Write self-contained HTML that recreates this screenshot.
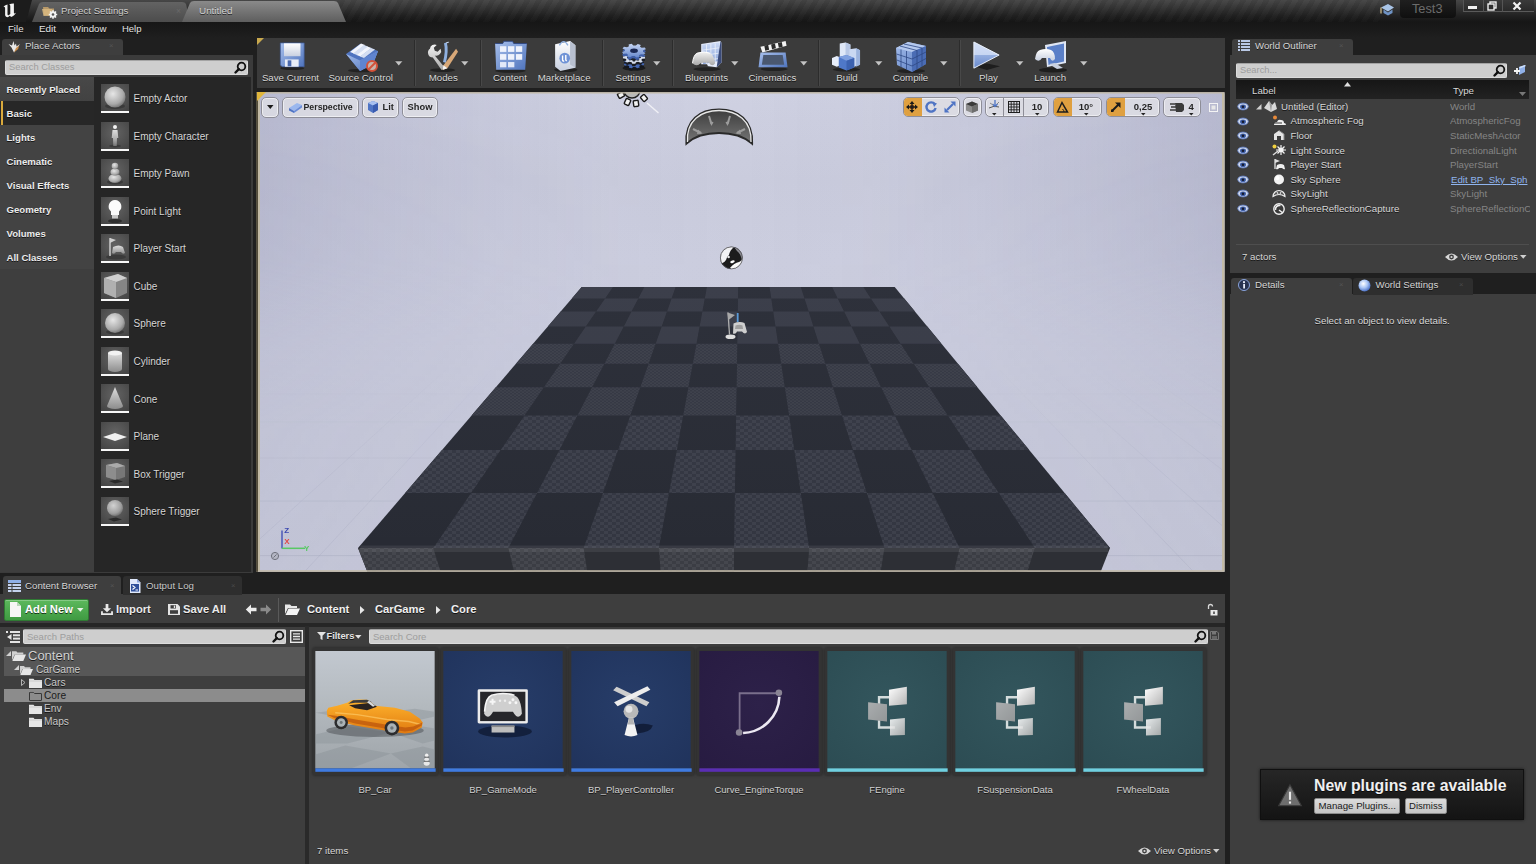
<!DOCTYPE html>
<html><head><meta charset="utf-8"><title>Unreal Editor</title>
<style>
*{box-sizing:border-box;margin:0;padding:0}
html,body{width:1536px;height:864px;overflow:hidden;background:#3e3e3e;font-family:"Liberation Sans",sans-serif;font-size:10px;color:#d8d8d8}
.a{position:absolute}
.t{position:absolute;white-space:nowrap;line-height:1}
svg{overflow:visible}
</style></head><body>
<div class="a" style="left:0px;top:0px;width:1536px;height:22px;background:linear-gradient(#474747 0,#353535 35%,#222 70%,#161616 100%);"></div>
<div class="a" style="left:340px;top:0px;width:1040px;height:22px;background:repeating-linear-gradient(120deg,rgba(0,0,0,.06) 0 5px,rgba(255,255,255,.012) 5px 10px);"></div>
<svg class="a" style="left:0px;top:0px;" width="32" height="22" viewBox="0 0 32 22"><path d="M0 0H32L26 22H0Z" fill="#1c1c1c"/>
<path d="M3.5 6.5c1.2-.9 2.6-1.7 4-2.1v9.800c0 .9.8 1.300 1.500.7l1.300-1V6.200c0-.9-.4-1.400-1.200-1.700 1.500-.7 3.200-1 4.800-.9v9.100c0 .7.500 1 1.100.6l.9-.6c-.6 1.900-2.600 3.500-4.800 4.300l-1.300-1.200-1.600 1.300c-1.700.2-3.100-.6-3.100-2.400V8.200c0-.9-.7-1.500-1.600-1.700z" fill="#f4f4f4"/></svg>
<svg class="a" style="left:30px;top:2px;" width="160" height="20" viewBox="0 0 160 20"><defs><linearGradient id="tg1" x1="0" y1="0" x2="0" y2="1"><stop offset="0" stop-color="#636363"/><stop offset="1" stop-color="#4c4c4c"/></linearGradient>
<linearGradient id="tg2" x1="0" y1="0" x2="0" y2="1"><stop offset="0" stop-color="#8a8a8a"/><stop offset="1" stop-color="#5e5e5e"/></linearGradient></defs>
<path d="M2 20 L9 2 Q10 0 13 0 H152 Q155 0 156 2 L160 20Z" fill="url(#tg1)"/></svg>
<svg class="a" style="left:182px;top:1px;" width="166" height="21" viewBox="0 0 166 21"><path d="M0 21 L8 2 Q9 0 12 0 H152 Q155 0 156 2 L164 21Z" fill="url(#tg2)"/></svg>
<svg class="a" style="left:42px;top:5px;" width="16" height="14" viewBox="0 0 16 14"><path d="M1 2h5l1.500 1.500H12V10H2Z" fill="#b89a6a"/><path d="M0 4h10l-1 7H1.500Z" fill="#d8b880" opacity=".85"/>
<circle cx="11" cy="9.500" r="3.200" fill="#f2f2f2"/><circle cx="11" cy="9.500" r="1.200" fill="#555"/>
<g stroke="#f2f2f2" stroke-width="1.600"><path d="M11 5.300v8.400M6.800 9.500h8.400M8 6.500l6 6M14 6.500l-6 6"/></g><circle cx="11" cy="9.500" r="1.300" fill="#555"/></svg>
<div class="t" style="left:61.0px;top:6.3px;font-size:9.64px;color:#cfcfcf;text-shadow:0 1px 0 rgba(0,0,0,.7);">Project Settings</div>
<div class="t" style="left:176.0px;top:7.3px;font-size:8.56px;color:#6a6a6a;">×</div>
<div class="t" style="left:199.0px;top:5.7px;font-size:9.88px;color:#d4d4d4;text-shadow:0 1px 0 rgba(0,0,0,.7);">Untitled</div>
<svg class="a" style="left:1380px;top:3px;" width="15" height="14" viewBox="0 0 15 14"><path d="M1 4.500 8 1l6 3.500-6 4Z" fill="#a9c4e6"/><path d="M3.500 6.500v3.500L8 12.500l4.500-2.500V6.500L8 9.500Z" fill="#6f93c4"/><path d="M1 4.500v6" stroke="#c9b98a" stroke-width="1.300"/></svg>
<div class="a" style="left:1400px;top:0px;width:56px;height:18px;background:linear-gradient(#1f1f1f,#0f0f0f);border-radius:0 0 4px 4px;"></div>
<div class="t" style="left:1412.0px;top:3.2px;font-size:12.76px;color:#6c6c6c;">Test3</div>
<div class="a" style="left:1463px;top:0px;width:71px;height:12px;background:linear-gradient(#3a3a3a,#2a2a2a);border-bottom:1px solid #5a5a5a;border-left:1px solid #555;"></div>
<div class="a" style="left:1483px;top:0px;width:1px;height:12px;background:#555;"></div>
<div class="a" style="left:1502px;top:0px;width:1px;height:12px;background:#555;"></div>
<div class="a" style="left:1468px;top:6px;width:9px;height:3px;background:#f0f0f0;"></div>
<svg class="a" style="left:1487px;top:1px;" width="11" height="10" viewBox="0 0 11 10"><rect x="3" y="1" width="6" height="6" fill="none" stroke="#eee" stroke-width="1.400"/><rect x="1" y="3" width="6" height="6" fill="#2e2e2e" stroke="#eee" stroke-width="1.400"/></svg>
<svg class="a" style="left:1512px;top:1px;" width="10" height="10" viewBox="0 0 10 10"><path d="M1.500 1.500l7 7M8.500 1.500l-7 7" stroke="#f2f2f2" stroke-width="2.200"/></svg>
<div class="a" style="left:0px;top:22px;width:1536px;height:16px;background:linear-gradient(#161616,#1f1f1f);"></div>
<div class="t" style="left:8.0px;top:24.0px;font-size:9.62px;color:#e4e4e4;text-shadow:0 1px 0 rgba(0,0,0,.7);">File</div>
<div class="t" style="left:39.0px;top:23.9px;font-size:9.87px;color:#e4e4e4;text-shadow:0 1px 0 rgba(0,0,0,.7);">Edit</div>
<div class="t" style="left:72.0px;top:23.9px;font-size:9.70px;color:#e4e4e4;text-shadow:0 1px 0 rgba(0,0,0,.7);">Window</div>
<div class="t" style="left:122.0px;top:24.1px;font-size:9.48px;color:#e4e4e4;text-shadow:0 1px 0 rgba(0,0,0,.7);">Help</div>
<div class="a" style="left:0px;top:38px;width:256px;height:539px;background:#1f1f1f;"></div>
<div class="a" style="left:0px;top:55px;width:253px;height:518px;background:#3b3b3b;"></div>
<div class="a" style="left:2px;top:38.6px;width:121px;height:16.4px;background:#3e3e3e;border-radius:3px 3px 0 0;"></div>
<svg class="a" style="left:7px;top:40px;" width="14" height="13" viewBox="0 0 14 13"><path d="M7 12.500 4.500 7.500 1.500 4l3.500 1.500L6.500 1l1 4.500 1.500-2 .5 3 3.500-2.500-3 4.500z" fill="#e8e8e8"/><path d="M7 12.500 9 8l3-2.500-.8 3.500z" fill="#c98c4a"/></svg>
<div class="t" style="left:25.0px;top:41.0px;font-size:9.90px;color:#d6d6d6;text-shadow:0 1px 0 rgba(0,0,0,.7);">Place Actors</div>
<div class="t" style="left:109.0px;top:42.2px;font-size:7.70px;color:#555;">×</div>
<div class="a" style="left:5px;top:60px;width:243px;height:15px;background:#cecece;border-radius:2px;border:1px solid #dcdcdc;border-top-color:#a4a4a4;"></div>
<div class="t" style="left:9.0px;top:62.9px;font-size:9.35px;color:#9d9d9d;">Search Classes</div>
<svg class="a" style="left:234px;top:61px;" width="13" height="13" viewBox="0 0 13 13"><circle cx="7.500" cy="5.500" r="3.800" fill="none" stroke="#111" stroke-width="1.800"/><path d="M4.800 8.200 1.500 11.500" stroke="#111" stroke-width="2.400" stroke-linecap="round"/></svg>
<div class="a" style="left:0px;top:77px;width:94px;height:495px;background:#3e3e3e;"></div>
<div class="a" style="left:0px;top:77px;width:94px;height:24px;background:linear-gradient(#484848,#424242);"></div>
<div class="t" style="left:6.5px;top:84.8px;font-size:9.60px;color:#ececec;font-weight:bold;text-shadow:0 1px 0 rgba(0,0,0,.7);">Recently Placed</div>
<div class="a" style="left:0px;top:101px;width:94px;height:24px;background:#272727;"></div>
<div class="a" style="left:1px;top:101px;width:2px;height:24px;background:#d9a93c;"></div>
<div class="t" style="left:6.5px;top:108.8px;font-size:9.60px;color:#ececec;font-weight:bold;text-shadow:0 1px 0 rgba(0,0,0,.7);">Basic</div>
<div class="a" style="left:0px;top:125px;width:94px;height:24px;background:#434343;"></div>
<div class="t" style="left:6.5px;top:132.8px;font-size:9.60px;color:#ececec;font-weight:bold;text-shadow:0 1px 0 rgba(0,0,0,.7);">Lights</div>
<div class="a" style="left:0px;top:149px;width:94px;height:24px;background:#434343;"></div>
<div class="t" style="left:6.5px;top:156.8px;font-size:9.60px;color:#ececec;font-weight:bold;text-shadow:0 1px 0 rgba(0,0,0,.7);">Cinematic</div>
<div class="a" style="left:0px;top:173px;width:94px;height:24px;background:#434343;"></div>
<div class="t" style="left:6.5px;top:180.8px;font-size:9.60px;color:#ececec;font-weight:bold;text-shadow:0 1px 0 rgba(0,0,0,.7);">Visual Effects</div>
<div class="a" style="left:0px;top:197px;width:94px;height:24px;background:#434343;"></div>
<div class="t" style="left:6.5px;top:204.8px;font-size:9.60px;color:#ececec;font-weight:bold;text-shadow:0 1px 0 rgba(0,0,0,.7);">Geometry</div>
<div class="a" style="left:0px;top:221px;width:94px;height:24px;background:#434343;"></div>
<div class="t" style="left:6.5px;top:228.8px;font-size:9.60px;color:#ececec;font-weight:bold;text-shadow:0 1px 0 rgba(0,0,0,.7);">Volumes</div>
<div class="a" style="left:0px;top:245px;width:94px;height:24px;background:#434343;"></div>
<div class="t" style="left:6.5px;top:252.8px;font-size:9.60px;color:#ececec;font-weight:bold;text-shadow:0 1px 0 rgba(0,0,0,.7);">All Classes</div>
<div class="a" style="left:94px;top:77px;width:156.6px;height:495px;background:#262626;"></div>
<svg width="0" height="0" class="a"><defs><linearGradient id="sh" x1="0" y1="0" x2="0" y2="1"><stop offset="0" stop-color="#dedede"/><stop offset="1" stop-color="#8c8c8c"/></linearGradient><radialGradient id="sp" cx=".4" cy=".35" r=".7"><stop offset="0" stop-color="#e6e6e6"/><stop offset=".7" stop-color="#a9a9a9"/><stop offset="1" stop-color="#6e6e6e"/></radialGradient></defs><defs><radialGradient id="tb" cx=".5" cy=".4" r=".7"><stop offset="0" stop-color="#777"/><stop offset="1" stop-color="#3c3c3c"/></radialGradient></defs></svg>
<svg class="a" style="left:101px;top:85px;" width="28" height="28" viewBox="0 1 28 28"><rect width="28" height="27" fill="#4f4f4f"/><rect width="28" height="27" fill="url(#tb)" opacity=".5"/><ellipse cx="14" cy="22" rx="10" ry="3" fill="#3a3a3a"/><circle cx="14" cy="13" r="10.500" fill="url(#sp)"/><rect y="27" width="28" height="2" fill="#f6f6f6"/></svg>
<div class="t" style="left:133.5px;top:94.1px;font-size:10.00px;color:#d6d6d6;text-shadow:0 1px 0 rgba(0,0,0,.7);">Empty Actor</div>
<svg class="a" style="left:101px;top:123px;" width="28" height="28" viewBox="0 1 28 28"><rect width="28" height="27" fill="#4f4f4f"/><rect width="28" height="27" fill="url(#tb)" opacity=".5"/><ellipse cx="14" cy="24" rx="6" ry="1.500" fill="#3a3a3a"/><circle cx="14" cy="5" r="2" fill="#f4f4f4"/><path d="M11.500 8h5l.8 8h-1.300l-.5 8h-1.200L14 17l-.3 7h-1.200l-.5-8h-1.300z" fill="url(#sh)"/><rect y="27" width="28" height="2" fill="#f6f6f6"/></svg>
<div class="t" style="left:133.5px;top:131.6px;font-size:10.00px;color:#d6d6d6;text-shadow:0 1px 0 rgba(0,0,0,.7);">Empty Character</div>
<svg class="a" style="left:101px;top:160px;" width="28" height="28" viewBox="0 1 28 28"><rect width="28" height="27" fill="#4f4f4f"/><rect width="28" height="27" fill="url(#tb)" opacity=".5"/><ellipse cx="14" cy="23" rx="8" ry="2.500" fill="#3a3a3a"/><ellipse cx="14" cy="19.500" rx="6.500" ry="4.500" fill="url(#sp)"/><ellipse cx="14" cy="13" rx="4.500" ry="3.500" fill="url(#sp)"/><circle cx="14" cy="7" r="3.300" fill="url(#sp)"/><rect y="27" width="28" height="2" fill="#f6f6f6"/></svg>
<div class="t" style="left:133.5px;top:169.2px;font-size:10.00px;color:#d6d6d6;text-shadow:0 1px 0 rgba(0,0,0,.7);">Empty Pawn</div>
<svg class="a" style="left:101px;top:198px;" width="28" height="28" viewBox="0 1 28 28"><rect width="28" height="27" fill="#4f4f4f"/><rect width="28" height="27" fill="url(#tb)" opacity=".5"/><ellipse cx="14" cy="24" rx="7" ry="2" fill="#2e2e2e"/><path d="M14 3a6.500 6.500 0 0 1 4 11.500V18h-8v-3.500A6.500 6.500 0 0 1 14 3z" fill="#fbfbfb"/><rect x="11" y="18" width="6" height="3.500" fill="#c9c9c9"/><rect y="27" width="28" height="2" fill="#f6f6f6"/></svg>
<div class="t" style="left:133.5px;top:206.8px;font-size:10.00px;color:#d6d6d6;text-shadow:0 1px 0 rgba(0,0,0,.7);">Point Light</div>
<svg class="a" style="left:101px;top:235px;" width="28" height="28" viewBox="0 1 28 28"><rect width="28" height="27" fill="#4f4f4f"/><rect width="28" height="27" fill="url(#tb)" opacity=".5"/><ellipse cx="15" cy="23" rx="10" ry="2.500" fill="#3a3a3a"/><path d="M9 4v18" stroke="#ddd" stroke-width="1.300"/><path d="M9 4l6 2-6 3z" fill="#cfcfcf"/><path d="M12 13q6-3 10 0l2 6q-2 2-4-1h-5q-2 3-4 1z" fill="url(#sh)"/><rect y="27" width="28" height="2" fill="#f6f6f6"/></svg>
<div class="t" style="left:133.5px;top:244.3px;font-size:10.00px;color:#d6d6d6;text-shadow:0 1px 0 rgba(0,0,0,.7);">Player Start</div>
<svg class="a" style="left:101px;top:273px;" width="28" height="28" viewBox="0 1 28 28"><rect width="28" height="27" fill="#4f4f4f"/><rect width="28" height="27" fill="url(#tb)" opacity=".5"/><path d="M3 6 17 2l9 4v15l-11 5-12-5z" fill="#858585"/><path d="M3 6 17 2l9 4-11 4z" fill="#cfcfcf"/><path d="M3 6l12 4v16L3 21z" fill="#b0b0b0"/><rect y="27" width="28" height="2" fill="#f6f6f6"/></svg>
<div class="t" style="left:133.5px;top:281.9px;font-size:10.00px;color:#d6d6d6;text-shadow:0 1px 0 rgba(0,0,0,.7);">Cube</div>
<svg class="a" style="left:101px;top:310px;" width="28" height="28" viewBox="0 1 28 28"><rect width="28" height="27" fill="#4f4f4f"/><rect width="28" height="27" fill="url(#tb)" opacity=".5"/><ellipse cx="14" cy="23" rx="9" ry="2.500" fill="#3a3a3a"/><circle cx="14" cy="14" r="10" fill="url(#sp)"/><rect y="27" width="28" height="2" fill="#f6f6f6"/></svg>
<div class="t" style="left:133.5px;top:319.4px;font-size:10.00px;color:#d6d6d6;text-shadow:0 1px 0 rgba(0,0,0,.7);">Sphere</div>
<svg class="a" style="left:101px;top:348px;" width="28" height="28" viewBox="0 1 28 28"><rect width="28" height="27" fill="#4f4f4f"/><rect width="28" height="27" fill="url(#tb)" opacity=".5"/><path d="M7 6v16a7 3 0 0 0 14 0V6z" fill="url(#sh)"/><ellipse cx="14" cy="6" rx="7" ry="2.500" fill="#f2f2f2"/><rect y="27" width="28" height="2" fill="#f6f6f6"/></svg>
<div class="t" style="left:133.5px;top:356.9px;font-size:10.00px;color:#d6d6d6;text-shadow:0 1px 0 rgba(0,0,0,.7);">Cylinder</div>
<svg class="a" style="left:101px;top:385px;" width="28" height="28" viewBox="0 1 28 28"><rect width="28" height="27" fill="#4f4f4f"/><rect width="28" height="27" fill="url(#tb)" opacity=".5"/><path d="M14 3 22 22a8 3 0 0 1-16 0z" fill="url(#sh)"/><rect y="27" width="28" height="2" fill="#f6f6f6"/></svg>
<div class="t" style="left:133.5px;top:394.5px;font-size:10.00px;color:#d6d6d6;text-shadow:0 1px 0 rgba(0,0,0,.7);">Cone</div>
<svg class="a" style="left:101px;top:423px;" width="28" height="28" viewBox="0 1 28 28"><rect width="28" height="27" fill="#4f4f4f"/><rect width="28" height="27" fill="url(#tb)" opacity=".5"/><path d="M2 15 14 11l12 4-12 4z" fill="#f0f0f0"/><rect y="27" width="28" height="2" fill="#f6f6f6"/></svg>
<div class="t" style="left:133.5px;top:432.0px;font-size:10.00px;color:#d6d6d6;text-shadow:0 1px 0 rgba(0,0,0,.7);">Plane</div>
<svg class="a" style="left:101px;top:460px;" width="28" height="28" viewBox="0 1 28 28"><rect width="28" height="27" fill="#4f4f4f"/><rect width="28" height="27" fill="url(#tb)" opacity=".5"/><path d="M5 6 16 4l8 3v11l-9 3-10-3z" fill="#777"/><path d="M5 6 16 4l8 3-9 2z" fill="#aaa"/><path d="M5 6l10 3v12L5 18z" fill="#8d8d8d"/><path d="M8 22l8-1.500 6 2-8 2z" fill="#2a2a2a"/><rect y="27" width="28" height="2" fill="#f6f6f6"/></svg>
<div class="t" style="left:133.5px;top:469.6px;font-size:10.00px;color:#d6d6d6;text-shadow:0 1px 0 rgba(0,0,0,.7);">Box Trigger</div>
<svg class="a" style="left:101px;top:498px;" width="28" height="28" viewBox="0 1 28 28"><rect width="28" height="27" fill="#4f4f4f"/><rect width="28" height="27" fill="url(#tb)" opacity=".5"/><circle cx="14" cy="11" r="8" fill="url(#sp)" opacity=".85"/><path d="M7 22l8-1.500 6 2-8 2z" fill="#2a2a2a"/><rect y="27" width="28" height="2" fill="#f6f6f6"/></svg>
<div class="t" style="left:133.5px;top:507.1px;font-size:10.00px;color:#d6d6d6;text-shadow:0 1px 0 rgba(0,0,0,.7);">Sphere Trigger</div>
<div class="a" style="left:253.5px;top:38px;width:978.5px;height:56px;background:#1f1f1f;"></div>
<div class="a" style="left:253px;top:55px;width:3.5px;height:518px;background:#202020;"></div>
<div class="a" style="left:256.5px;top:38px;width:969.5px;height:50px;background:#3b3b3b;"></div>
<svg class="a" style="left:257px;top:38px;" width="8" height="8" viewBox="0 0 8 8"><path d="M0 0h7L0 7z" fill="#c9a94e"/></svg>
<div class="a" style="left:414px;top:40px;width:1px;height:46px;background:#2c2c2c;"></div>
<div class="a" style="left:415px;top:40px;width:1px;height:46px;background:#484848;"></div>
<div class="a" style="left:479.5px;top:40px;width:1px;height:46px;background:#2c2c2c;"></div>
<div class="a" style="left:480.5px;top:40px;width:1px;height:46px;background:#484848;"></div>
<div class="a" style="left:602px;top:40px;width:1px;height:46px;background:#2c2c2c;"></div>
<div class="a" style="left:603px;top:40px;width:1px;height:46px;background:#484848;"></div>
<div class="a" style="left:672px;top:40px;width:1px;height:46px;background:#2c2c2c;"></div>
<div class="a" style="left:673px;top:40px;width:1px;height:46px;background:#484848;"></div>
<div class="a" style="left:817.5px;top:40px;width:1px;height:46px;background:#2c2c2c;"></div>
<div class="a" style="left:818.5px;top:40px;width:1px;height:46px;background:#484848;"></div>
<div class="a" style="left:959px;top:40px;width:1px;height:46px;background:#2c2c2c;"></div>
<div class="a" style="left:960px;top:40px;width:1px;height:46px;background:#484848;"></div>
<svg width="0" height="0" class="a"><defs>
<linearGradient id="bl" x1="0" y1="0" x2="1" y2="1"><stop offset="0" stop-color="#a8c0ec"/><stop offset="1" stop-color="#4f74bd"/></linearGradient>
<linearGradient id="bl2" x1="0" y1="0" x2="0" y2="1"><stop offset="0" stop-color="#c6d6f4"/><stop offset="1" stop-color="#6688cc"/></linearGradient>
<linearGradient id="wh" x1="0" y1="0" x2="0" y2="1"><stop offset="0" stop-color="#ffffff"/><stop offset="1" stop-color="#c8d0e0"/></linearGradient>
<linearGradient id="gy" x1="0" y1="0" x2="0" y2="1"><stop offset="0" stop-color="#f2f2f2"/><stop offset="1" stop-color="#a9a9a9"/></linearGradient>
</defs></svg>
<svg class="a" style="left:278.5px;top:42px;" width="26.5" height="27.5" viewBox="1 0 28 30"><ellipse cx="15" cy="28.500" rx="13" ry="2" fill="#222"/>
<path d="M2 1h26v26H4l-2-2z" fill="url(#bl)"/><path d="M2 1h26v26H4l-2-2z" fill="none" stroke="#3d5a9a" stroke-width=".8"/>
<rect x="6" y="1.500" width="18" height="14" fill="url(#wh)"/><rect x="7" y="19" width="15" height="8" fill="#e8ecf6"/><rect x="10" y="20" width="4" height="6.500" fill="#4a69ad"/></svg>
<div class="t" style="left:261.9px;top:72.7px;font-size:9.70px;color:#d8d8d8;text-shadow:0 1px 0 rgba(0,0,0,.7);">Save Current</div>
<svg class="a" style="left:345px;top:41px;" width="34" height="31" viewBox="0 0 34 31"><ellipse cx="17" cy="29.500" rx="14" ry="1.800" fill="#222"/>
<path d="M1 13 15 3l18 7-5 13-13 7z" fill="#4f74c0"/>
<path d="M5 11 16 2.500l4 1.500L9 12.500z" fill="#f2f5fc"/><path d="M8 12.500 19 4l4 1.500-11 8.500z" fill="#d4def2"/><path d="M11.500 14 22.500 5.500l4 1.500-11 8.500z" fill="#f2f5fc"/><path d="M15 15.500 26 7l4 1.500L19 17z" fill="#d4def2"/>
<path d="M1 13l14 6.500 18-9.500-5 13-13 7z" fill="url(#bl)"/><path d="M15 19.500l18-9.500-5 13-13 7z" fill="#5f84d0"/>
<circle cx="27" cy="25" r="5" fill="#c8b4ac" stroke="#d4523a" stroke-width="2"/><path d="M23.500 28.500l7-7" stroke="#d4523a" stroke-width="2"/></svg>
<div class="t" style="left:328.4px;top:72.7px;font-size:9.70px;color:#d8d8d8;text-shadow:0 1px 0 rgba(0,0,0,.7);">Source Control</div>
<svg class="a" style="left:395px;top:61px;" width="8" height="5" viewBox="0 0 8 5"><path d="M0 0h7.500L3.750 4.500z" fill="#c4c4c4"/><path d="M0 0h7.500" stroke="#222" stroke-width=".5"/></svg>
<svg class="a" style="left:427px;top:41px;" width="32" height="31" viewBox="0 0 33 32"><ellipse cx="16" cy="30" rx="13" ry="2" fill="#222"/>
<path d="M3 8a5 5 0 0 1 7-4l-3 3 1 3 3 1 3-3a5 5 0 0 1-6 7l10 12-3 3L6 17a5 5 0 0 1-3-9z" fill="url(#gy)"/>
<path d="M19 2q2 8-1 20" stroke="#8fb0e0" stroke-width="3" fill="none"/><path d="M19 2q3-2 4-1-2 2-4 1z" fill="#c8d8f0"/>
<path d="M30 8l2 3-11 17-5 2 1-5z" fill="#d8a878"/><path d="M16 30l1-5 4 3z" fill="#f4f4f4"/></svg>
<div class="t" style="left:428.7px;top:72.7px;font-size:9.70px;color:#d8d8d8;text-shadow:0 1px 0 rgba(0,0,0,.7);">Modes</div>
<svg class="a" style="left:461px;top:61px;" width="8" height="5" viewBox="0 0 8 5"><path d="M0 0h7.500L3.750 4.500z" fill="#c4c4c4"/><path d="M0 0h7.500" stroke="#222" stroke-width=".5"/></svg>
<svg class="a" style="left:494px;top:40px;" width="35" height="31" viewBox="1 1 32 28"><ellipse cx="16" cy="29" rx="14" ry="1.800" fill="#222"/>
<path d="M2 4h7l1-2h8l1 2h12l-1.500 24H3z" fill="url(#bl)"/><path d="M2 4h7l1-2h8l1 2h12" fill="none" stroke="#2c4380" stroke-width=".8"/>
<g fill="#eef2fc"><rect x="6.500" y="6.500" width="5.800" height="5.200"/><rect x="13.800" y="6.500" width="5.800" height="5.200"/><rect x="21" y="6.500" width="5.800" height="5.200"/><rect x="6.500" y="13.700" width="5.800" height="5.200"/><rect x="13.800" y="13.700" width="5.800" height="5.200"/><rect x="21" y="13.700" width="5.800" height="5.200"/><rect x="6.500" y="21" width="5.800" height="4.800" opacity=".9"/><rect x="13.800" y="21" width="5.800" height="4.800" opacity=".9"/></g></svg>
<div class="t" style="left:493.0px;top:72.7px;font-size:9.70px;color:#d8d8d8;text-shadow:0 1px 0 rgba(0,0,0,.7);">Content</div>
<svg class="a" style="left:551.5px;top:40px;" width="26.5" height="32" viewBox="1 1 23 30"><ellipse cx="13" cy="29" rx="11" ry="2" fill="#222"/>
<path d="M3 5 17 2l5 4v21L8 30 3 26z" fill="url(#wh)"/><path d="M17 2l5 4v21l-5-3z" fill="#b8c0d0"/>
<path d="M7 6q4-7 8 0" stroke="#8fb0e0" stroke-width="1.300" fill="none"/>
<circle cx="12" cy="18" r="5" fill="#6f93d6"/><path d="M10 15.500v4q0 1.500 1.500 1M13 15v4.500q0 1 1 .5" stroke="#fff" stroke-width="1.300" fill="none"/></svg>
<div class="t" style="left:537.8px;top:72.7px;font-size:9.70px;color:#d8d8d8;text-shadow:0 1px 0 rgba(0,0,0,.7);">Marketplace</div>
<svg class="a" style="left:620px;top:42px;" width="28" height="29" viewBox="0 0 28 30"><ellipse cx="14" cy="27" rx="12" ry="2.800" fill="#1c1c1c"/>
<path d="M22.5 21.5L24.7 22.4L23.7 24.0L21.0 23.8L19.4 24.8L19.9 26.4L17.2 27.1L15.5 25.9L13.2 25.9L11.6 27.2L8.8 26.6L9.1 25.0L7.4 24.1L4.7 24.4L3.5 22.8L5.6 21.9L5.5 20.5L3.3 19.6L4.3 18.0L7.0 18.2L8.6 17.2L8.1 15.6L10.8 14.9L12.5 16.1L14.8 16.1L16.4 14.8L19.2 15.4L18.9 17.0L20.6 17.9L23.3 17.6L24.5 19.2L22.4 20.1Z" fill="#3a5aa0"/><path d="M22.5 21.5L24.7 22.4L23.7 24.0L21.0 23.8L19.4 24.8L19.9 26.4L17.2 27.1L15.5 25.9L13.2 25.9L11.6 27.2L8.8 26.6L9.1 25.0L7.4 24.1L4.7 24.4L3.5 22.8L5.6 21.9L5.5 20.5L3.3 19.6L4.3 18.0L7.0 18.2L8.6 17.2L8.1 15.6L10.8 14.9L12.5 16.1L14.8 16.1L16.4 14.8L19.2 15.4L18.9 17.0L20.6 17.9L23.3 17.6L24.5 19.2L22.4 20.1Z" fill="#141820" transform="translate(0 2.500)"/><path d="M22.5 21.5L24.7 22.4L23.7 24.0L21.0 23.8L19.4 24.8L19.9 26.4L17.2 27.1L15.5 25.9L13.2 25.9L11.6 27.2L8.8 26.6L9.1 25.0L7.4 24.1L4.7 24.4L3.5 22.8L5.6 21.9L5.5 20.5L3.3 19.6L4.3 18.0L7.0 18.2L8.6 17.2L8.1 15.6L10.8 14.9L12.5 16.1L14.8 16.1L16.4 14.8L19.2 15.4L18.9 17.0L20.6 17.9L23.3 17.6L24.5 19.2L22.4 20.1Z" fill="#4668b4"/>
<path d="M21.5 18.7L23.0 20.1L20.8 21.4L18.3 20.5L16.1 21.0L15.3 22.6L12.2 22.6L11.6 20.9L9.4 20.4L6.9 21.2L4.7 19.9L6.3 18.5L5.4 17.2L2.6 16.8L2.6 15.0L5.5 14.6L6.5 13.3L5.0 11.9L7.2 10.6L9.7 11.5L11.9 11.0L12.7 9.4L15.8 9.4L16.4 11.1L18.6 11.6L21.1 10.8L23.3 12.1L21.7 13.5L22.6 14.8L25.4 15.2L25.4 17.0L22.5 17.4Z" fill="#1a1c22" transform="translate(0 2.500)"/><path d="M21.5 18.7L23.0 20.1L20.8 21.4L18.3 20.5L16.1 21.0L15.3 22.6L12.2 22.6L11.6 20.9L9.4 20.4L6.9 21.2L4.7 19.9L6.3 18.5L5.4 17.2L2.6 16.8L2.6 15.0L5.5 14.6L6.5 13.3L5.0 11.9L7.2 10.6L9.7 11.5L11.9 11.0L12.7 9.4L15.8 9.4L16.4 11.1L18.6 11.6L21.1 10.8L23.3 12.1L21.7 13.5L22.6 14.8L25.4 15.2L25.4 17.0L22.5 17.4Z" fill="#d4dcec"/><path d="M21.5 18.7L23.0 20.1L20.8 21.4L18.3 20.5L16.1 21.0L15.3 22.6L12.2 22.6L11.6 20.9L9.4 20.4L6.9 21.2L4.7 19.9L6.3 18.5L5.4 17.2L2.6 16.8L2.6 15.0L5.5 14.6L6.5 13.3L5.0 11.9L7.2 10.6L9.7 11.5L11.9 11.0L12.7 9.4L15.8 9.4L16.4 11.1L18.6 11.6L21.1 10.8L23.3 12.1L21.7 13.5L22.6 14.8L25.4 15.2L25.4 17.0L22.5 17.4Z" fill="#20242c" transform="translate(14 16) scale(.62) translate(-14 -16)"/>
<path d="M23.3 10.1L25.9 11.3L24.4 13.0L21.2 12.6L19.2 13.6L19.6 15.5L16.4 16.1L14.7 14.5L12.1 14.4L10.1 15.9L7.0 15.0L7.8 13.2L6.1 12.0L2.8 12.3L1.7 10.4L4.5 9.4L4.7 7.9L2.1 6.7L3.6 5.0L6.8 5.4L8.8 4.4L8.4 2.5L11.6 1.9L13.3 3.5L15.9 3.6L17.9 2.1L21.0 3.0L20.2 4.8L21.9 6.0L25.2 5.7L26.3 7.6L23.5 8.6Z" fill="#3f5fa8" transform="translate(0 2.500)"/><path d="M23.3 10.1L25.9 11.3L24.4 13.0L21.2 12.6L19.2 13.6L19.6 15.5L16.4 16.1L14.7 14.5L12.1 14.4L10.1 15.9L7.0 15.0L7.8 13.2L6.1 12.0L2.8 12.3L1.7 10.4L4.5 9.4L4.7 7.9L2.1 6.7L3.6 5.0L6.8 5.4L8.8 4.4L8.4 2.5L11.6 1.9L13.3 3.5L15.9 3.6L17.9 2.1L21.0 3.0L20.2 4.8L21.9 6.0L25.2 5.7L26.3 7.6L23.5 8.6Z" fill="url(#bl2)"/><ellipse cx="14" cy="9" rx="4" ry="2.300" fill="#1c2a55"/></svg>
<div class="t" style="left:615.5px;top:72.7px;font-size:9.70px;color:#d8d8d8;text-shadow:0 1px 0 rgba(0,0,0,.7);">Settings</div>
<svg class="a" style="left:653px;top:61px;" width="8" height="5" viewBox="0 0 8 5"><path d="M0 0h7.500L3.750 4.500z" fill="#c4c4c4"/><path d="M0 0h7.500" stroke="#222" stroke-width=".5"/></svg>
<svg class="a" style="left:691px;top:41px;" width="32" height="30" viewBox="0 0 32 31"><ellipse cx="16" cy="29" rx="14" ry="2" fill="#222"/>
<path d="M10 3 30 0l1 2v20l-5 5-16-2z" fill="#e6ecfa"/><path d="M11 4 29 1.500v19L12 24z" fill="url(#bl2)" opacity=".75"/><g stroke="#f4f7fd" stroke-width=".8" opacity=".9"><path d="M15.500 3.500v20M20 3v20M24.500 2.500v19M11 9.500l18-2.500M11 15l18-2.500M11.500 20.500l17.500-2.500"/></g>
<path d="M30 0l1 2v20l-5 5z" fill="#3a4a78"/>
<path d="M1 23q1-9 5-10.500 7-2.500 13 0 4 1.500 5.500 10.500-3 4.500-6.500-.5h-8q-4.500 5-9 .5z" fill="url(#gy)"/><path d="M1 23q1-9 5-10.500 7-2.500 13 0" fill="none" stroke="#fff" stroke-width="1"/><path d="M8 24h8l1 2H7z" fill="#333"/></svg>
<div class="t" style="left:684.9px;top:72.7px;font-size:9.70px;color:#d8d8d8;text-shadow:0 1px 0 rgba(0,0,0,.7);">Blueprints</div>
<svg class="a" style="left:731px;top:61px;" width="8" height="5" viewBox="0 0 8 5"><path d="M0 0h7.500L3.750 4.500z" fill="#c4c4c4"/><path d="M0 0h7.500" stroke="#222" stroke-width=".5"/></svg>
<svg class="a" style="left:758px;top:41px;" width="31" height="30" viewBox="0 0 31 31"><ellipse cx="16" cy="29" rx="14" ry="2" fill="#222"/>
<path d="M2 6 28 0l1 5L4 12z" fill="#f4f4f4"/><g fill="#2a2a2a"><path d="M6 5l4-1 1 5-4 1zM13 3.500l4-1 1 5-4 1zM20 2l4-1 1 5-4 1z"/></g>
<path d="M2 12h26l2 15H0z" fill="url(#bl)"/><path d="M5 14.500h20l1.500 10H3.500z" fill="#4a5870"/></svg>
<div class="t" style="left:748.5px;top:72.7px;font-size:9.70px;color:#d8d8d8;text-shadow:0 1px 0 rgba(0,0,0,.7);">Cinematics</div>
<svg class="a" style="left:800px;top:61px;" width="8" height="5" viewBox="0 0 8 5"><path d="M0 0h7.500L3.750 4.500z" fill="#c4c4c4"/><path d="M0 0h7.500" stroke="#222" stroke-width=".5"/></svg>
<svg class="a" style="left:832px;top:41px;" width="29" height="31" viewBox="0 0 30 31"><ellipse cx="15" cy="29" rx="14" ry="2" fill="#222"/>
<path d="M8 2l6-1 5 2v20l-6 2-5-2z" fill="#dfe8f8"/><path d="M14 1l5 2v20l-5 2z" fill="#b8c8e6"/>
<path d="M18 8l7-1 4 2v15l-6 2-5-2z" fill="#cad8f2"/><path d="M25 7l4 2v15l-4 2z" fill="#9db4de"/>
<path d="M0 17l5-2 5 2v7l-5 2-5-2z" fill="#e8eefa"/>
<path d="M7 16l8-2 8 3v10l-8 3-8-3z" fill="#4f78c8"/><path d="M7 16l8-2 8 3-8 3z" fill="#7fa0e0"/><path d="M15 20l8-3v10l-8 3z" fill="#3c62b0"/></svg>
<div class="t" style="left:836.2px;top:72.7px;font-size:9.70px;color:#d8d8d8;text-shadow:0 1px 0 rgba(0,0,0,.7);">Build</div>
<svg class="a" style="left:875px;top:61px;" width="8" height="5" viewBox="0 0 8 5"><path d="M0 0h7.500L3.750 4.500z" fill="#c4c4c4"/><path d="M0 0h7.500" stroke="#222" stroke-width=".5"/></svg>
<svg class="a" style="left:895px;top:41px;" width="32" height="32" viewBox="0 0 32 32"><ellipse cx="16" cy="30" rx="14" ry="2" fill="#222"/>
<path d="M1 7 13 1l18 4v18l-14 8L2 24z" fill="url(#bl)"/><path d="M1 7 13 1l18 4-14 6z" fill="#b4c8ee"/><path d="M17 11l14-6v18l-14 8z" fill="#4a6cb4"/>
<g stroke="#2e4884" stroke-width="1" opacity=".8" fill="none"><path d="M1.500 13l15.500 5 14-7M1.800 19l15.200 6 14-7.500M6 8.500v18M11.500 10v19M22 9v20M27 7v19M5 5l17 4.500M9 3l18 4"/></g></svg>
<div class="t" style="left:892.7px;top:72.7px;font-size:9.70px;color:#d8d8d8;text-shadow:0 1px 0 rgba(0,0,0,.7);">Compile</div>
<svg class="a" style="left:940px;top:61px;" width="8" height="5" viewBox="0 0 8 5"><path d="M0 0h7.500L3.750 4.500z" fill="#c4c4c4"/><path d="M0 0h7.500" stroke="#222" stroke-width=".5"/></svg>
<svg class="a" style="left:972px;top:40px;" width="29" height="32" viewBox="0 0 31 32"><path d="M2 27l14 4 14-4-14-3z" fill="#1e1e1e"/><path d="M2 1 29 15 2 29z" fill="url(#bl2)"/><path d="M2 1 29 15 2 15z" fill="#dbe6fa" opacity=".7"/><path d="M2 1 29 15 2 29z" fill="none" stroke="#eef3fc" stroke-width="1"/></svg>
<div class="t" style="left:979.1px;top:72.7px;font-size:9.70px;color:#d8d8d8;text-shadow:0 1px 0 rgba(0,0,0,.7);">Play</div>
<svg class="a" style="left:1016px;top:61px;" width="8" height="5" viewBox="0 0 8 5"><path d="M0 0h7.500L3.750 4.500z" fill="#c4c4c4"/><path d="M0 0h7.500" stroke="#222" stroke-width=".5"/></svg>
<svg class="a" style="left:1035px;top:41px;" width="32" height="31" viewBox="0 0 32 31"><ellipse cx="18" cy="29" rx="14" ry="2.500" fill="#1e1e1e"/>
<path d="M10 4 31 0v22l-19 4z" fill="#dfe6f4"/><path d="M12 6 29 2.500v18L13.500 24z" fill="#5b80c8"/>
<path d="M14 23l8 5 6-1-8-5z" fill="#c8d0e0"/>
<path d="M0 18q1-8 5-9 6-2 11 0 4 2 4 9-3 4-5-1H7q-3 5-7 1z" fill="url(#wh)"/></svg>
<div class="t" style="left:1034.3px;top:72.7px;font-size:9.70px;color:#d8d8d8;text-shadow:0 1px 0 rgba(0,0,0,.7);">Launch</div>
<svg class="a" style="left:1080px;top:61px;" width="8" height="5" viewBox="0 0 8 5"><path d="M0 0h7.500L3.750 4.500z" fill="#c4c4c4"/><path d="M0 0h7.500" stroke="#222" stroke-width=".5"/></svg>
<svg class="a" style="left:0;top:0" width="1536" height="580" viewBox="0 0 1536 580"><defs>
<linearGradient id="sky" x1="0" y1="0" x2="0" y2="1"><stop offset="0.001" stop-color="#cfd1e2"/><stop offset="0.058" stop-color="#cdcfe0"/><stop offset="0.183" stop-color="#caccdd"/><stop offset="0.350" stop-color="#cccedf"/><stop offset="0.517" stop-color="#cbcdde"/><stop offset="0.704" stop-color="#c8cadb"/><stop offset="1.000" stop-color="#c6c8d9"/></linearGradient>
<linearGradient id="skyc" x1="0" y1="0" x2="1" y2="0"><stop offset="0.000" stop-color="#75779d" stop-opacity="0.260"/><stop offset="0.125" stop-color="#75779d" stop-opacity="0.155"/><stop offset="0.250" stop-color="#75779d" stop-opacity="0.075"/><stop offset="0.375" stop-color="#75779d" stop-opacity="0.021"/><stop offset="0.500" stop-color="#75779d" stop-opacity="0.000"/><stop offset="0.625" stop-color="#75779d" stop-opacity="0.021"/><stop offset="0.750" stop-color="#75779d" stop-opacity="0.075"/><stop offset="0.875" stop-color="#75779d" stop-opacity="0.155"/><stop offset="1.000" stop-color="#75779d" stop-opacity="0.260"/></linearGradient>
<linearGradient id="vm" x1="0" y1="0" x2="0" y2="1"><stop offset="0.001" stop-color="#ffffff"/><stop offset="0.350" stop-color="#d9d9d9"/><stop offset="0.537" stop-color="#808080"/><stop offset="0.704" stop-color="#4c4c4c"/><stop offset="1.000" stop-color="#333333"/></linearGradient>
<mask id="vmask"><rect x="256.500" y="92.300" width="968" height="479.500" fill="url(#vm)"/></mask>
<linearGradient id="fog" x1="0" y1="0" x2="0" y2="1"><stop offset="0" stop-color="#8a8ea8" stop-opacity=".06"/><stop offset="1" stop-color="#8a8ea8" stop-opacity="0"/></linearGradient>
<pattern id="tex2" width="4" height="3" patternUnits="userSpaceOnUse"><rect width="2" height="1.500" fill="#fff" opacity=".045"/><rect x="2" y="1.500" width="2" height="1.500" fill="#fff" opacity=".045"/></pattern><pattern id="tex" width="8" height="6" patternUnits="userSpaceOnUse"><rect width="4" height="3" fill="#fff" opacity=".05"/><rect x="4" y="3" width="4" height="3" fill="#fff" opacity=".05"/></pattern>
<radialGradient id="chrome" cx=".55" cy=".6" r=".6"><stop offset="0" stop-color="#fff"/><stop offset=".18" stop-color="#222"/><stop offset=".45" stop-color="#0a0a0a"/><stop offset=".7" stop-color="#888"/><stop offset=".88" stop-color="#eee"/><stop offset="1" stop-color="#333"/></radialGradient>
<linearGradient id="dome" x1="0" y1="0" x2="0" y2="1"><stop offset="0" stop-color="#3c3c3c"/><stop offset="1" stop-color="#777"/></linearGradient>
<clipPath id="vpc"><rect x="257" y="92.500" width="967" height="479"/></clipPath>
</defs><rect x="256.500" y="92.300" width="968" height="479.500" fill="url(#sky)"/><rect x="256.500" y="92.300" width="968" height="479.500" fill="url(#skyc)" mask="url(#vmask)"/><clipPath id="gndc"><rect x="258" y="365" width="967" height="207"/></clipPath><linearGradient id="gfade" x1="0" y1="0" x2="0" y2="1"><stop offset="0" stop-color="#fff" stop-opacity="0"/><stop offset=".5" stop-color="#fff" stop-opacity=".6"/><stop offset="1" stop-color="#fff" stop-opacity="1"/></linearGradient><mask id="gmask"><rect x="258" y="365" width="967" height="207" fill="url(#gfade)"/></mask><g clip-path="url(#vpc)"><g clip-path="url(#gndc)" mask="url(#gmask)"><path d="M258 371H1223" stroke="#7e819e" stroke-width="1" opacity="0.05"/><path d="M258 394H1223" stroke="#7e819e" stroke-width="1" opacity="0.08"/><path d="M258 422H1223" stroke="#7e819e" stroke-width="1" opacity="0.12"/><path d="M258 458H1223" stroke="#7e819e" stroke-width="1" opacity="0.15"/><path d="M258 501H1223" stroke="#7e819e" stroke-width="1" opacity="0.17"/><path d="M258 555.6H1223" stroke="#7e819e" stroke-width="1" opacity="0.19"/><path d="M741 101L214.7 580" stroke="#7e819e" stroke-width="1" opacity=".13"/><path d="M741 101L296.9 580" stroke="#7e819e" stroke-width="1" opacity=".13"/><path d="M741 101L1201.5 580" stroke="#7e819e" stroke-width="1" opacity=".13"/><path d="M741 101L1283.7 580" stroke="#7e819e" stroke-width="1" opacity=".13"/><path d="M741 101L1366.0 580" stroke="#7e819e" stroke-width="1" opacity=".13"/><path d="M741 101L1448.2 580" stroke="#7e819e" stroke-width="1" opacity=".13"/><path d="M741 101L1530.4 580" stroke="#7e819e" stroke-width="1" opacity=".13"/><path d="M741 101L1612.7 580" stroke="#7e819e" stroke-width="1" opacity=".13"/><path d="M741 101L1694.9 580" stroke="#7e819e" stroke-width="1" opacity=".13"/><path d="M741 101L1777.1 580" stroke="#7e819e" stroke-width="1" opacity=".13"/><path d="M741 101L1859.4 580" stroke="#7e819e" stroke-width="1" opacity=".13"/><path d="M741 101L1941.6 580" stroke="#7e819e" stroke-width="1" opacity=".13"/><path d="M741 101L2023.8 580" stroke="#7e819e" stroke-width="1" opacity=".13"/><path d="M741 101L2106.0 580" stroke="#7e819e" stroke-width="1" opacity=".13"/><path d="M741 101L2188.3 580" stroke="#7e819e" stroke-width="1" opacity=".13"/></g><path d="M581.7 287.0L894.7 287.0L1110.0 548.0L358.0 548.0Z" fill="#282b34" /><path d="M471.1 493.0L537.1 493.0L508.4 548.0L433.2 548.0ZM603.0 493.0L669.0 493.0L658.8 548.0L583.6 548.0ZM734.9 493.0L800.8 493.0L809.2 548.0L734.0 548.0ZM866.8 493.0L932.7 493.0L959.6 548.0L884.4 548.0ZM998.7 493.0L1064.6 493.0L1110.0 548.0L1034.8 548.0ZM442.0 450.1L500.7 450.1L471.1 493.0L405.2 493.0ZM559.4 450.1L618.1 450.1L603.0 493.0L537.1 493.0ZM676.9 450.1L735.6 450.1L734.9 493.0L669.0 493.0ZM794.3 450.1L853.0 450.1L866.8 493.0L800.8 493.0ZM911.7 450.1L970.5 450.1L998.7 493.0L932.7 493.0ZM524.5 415.6L577.4 415.6L559.4 450.1L500.7 450.1ZM630.3 415.6L683.2 415.6L676.9 450.1L618.1 450.1ZM736.1 415.6L789.1 415.6L794.3 450.1L735.6 450.1ZM842.0 415.6L894.9 415.6L911.7 450.1L853.0 450.1ZM947.8 415.6L1000.7 415.6L1029.2 450.1L970.5 450.1ZM495.8 387.3L543.9 387.3L524.5 415.6L471.5 415.6ZM592.1 387.3L640.3 387.3L630.3 415.6L577.4 415.6ZM688.4 387.3L736.6 387.3L736.1 415.6L683.2 415.6ZM784.8 387.3L832.9 387.3L842.0 415.6L789.1 415.6ZM881.1 387.3L929.3 387.3L947.8 415.6L894.9 415.6ZM560.2 363.7L604.4 363.7L592.1 387.3L543.9 387.3ZM648.6 363.7L692.8 363.7L688.4 387.3L640.3 387.3ZM737.0 363.7L781.2 363.7L784.8 387.3L736.6 387.3ZM825.4 363.7L869.6 363.7L881.1 387.3L832.9 387.3ZM913.7 363.7L957.9 363.7L977.4 387.3L929.3 387.3ZM533.2 343.7L574.0 343.7L560.2 363.7L516.0 363.7ZM614.8 343.7L655.6 343.7L648.6 363.7L604.4 363.7ZM696.5 343.7L737.3 343.7L737.0 363.7L692.8 363.7ZM778.1 343.7L818.9 343.7L825.4 363.7L781.2 363.7ZM859.8 343.7L900.6 343.7L913.7 363.7L869.6 363.7ZM585.8 326.5L623.8 326.5L614.8 343.7L574.0 343.7ZM661.7 326.5L699.6 326.5L696.5 343.7L655.6 343.7ZM737.6 326.5L775.5 326.5L778.1 343.7L737.3 343.7ZM813.4 326.5L851.4 326.5L859.8 343.7L818.9 343.7ZM889.3 326.5L927.3 326.5L941.4 343.7L900.6 343.7ZM560.7 311.6L596.1 311.6L585.8 326.5L547.9 326.5ZM631.5 311.6L667.0 311.6L661.7 326.5L623.8 326.5ZM702.4 311.6L737.8 311.6L737.6 326.5L699.6 326.5ZM773.2 311.6L808.7 311.6L813.4 326.5L775.5 326.5ZM844.1 311.6L879.5 311.6L889.3 326.5L851.4 326.5ZM605.1 298.6L638.3 298.6L631.5 311.6L596.1 311.6ZM671.6 298.6L704.8 298.6L702.4 311.6L667.0 311.6ZM738.0 298.6L771.3 298.6L773.2 311.6L737.8 311.6ZM804.5 298.6L837.7 298.6L844.1 311.6L808.7 311.6ZM870.9 298.6L904.2 298.6L915.0 311.6L879.5 311.6ZM581.7 287.0L613.0 287.0L605.1 298.6L571.9 298.6ZM644.3 287.0L675.6 287.0L671.6 298.6L638.3 298.6ZM706.9 287.0L738.2 287.0L738.0 298.6L704.8 298.6ZM769.5 287.0L800.8 287.0L804.5 298.6L771.3 298.6ZM832.1 287.0L863.4 287.0L870.9 298.6L837.7 298.6Z" fill="#333641"/><path d="M471.1 493.0L537.1 493.0L508.4 548.0L433.2 548.0ZM603.0 493.0L669.0 493.0L658.8 548.0L583.6 548.0ZM734.9 493.0L800.8 493.0L809.2 548.0L734.0 548.0ZM866.8 493.0L932.7 493.0L959.6 548.0L884.4 548.0ZM998.7 493.0L1064.6 493.0L1110.0 548.0L1034.8 548.0ZM442.0 450.1L500.7 450.1L471.1 493.0L405.2 493.0ZM559.4 450.1L618.1 450.1L603.0 493.0L537.1 493.0ZM676.9 450.1L735.6 450.1L734.9 493.0L669.0 493.0ZM794.3 450.1L853.0 450.1L866.8 493.0L800.8 493.0ZM911.7 450.1L970.5 450.1L998.7 493.0L932.7 493.0ZM524.5 415.6L577.4 415.6L559.4 450.1L500.7 450.1ZM630.3 415.6L683.2 415.6L676.9 450.1L618.1 450.1ZM736.1 415.6L789.1 415.6L794.3 450.1L735.6 450.1ZM842.0 415.6L894.9 415.6L911.7 450.1L853.0 450.1ZM947.8 415.6L1000.7 415.6L1029.2 450.1L970.5 450.1Z" fill="url(#tex)"/><path d="M495.8 387.3L543.9 387.3L524.5 415.6L471.5 415.6ZM592.1 387.3L640.3 387.3L630.3 415.6L577.4 415.6ZM688.4 387.3L736.6 387.3L736.1 415.6L683.2 415.6ZM784.8 387.3L832.9 387.3L842.0 415.6L789.1 415.6ZM881.1 387.3L929.3 387.3L947.8 415.6L894.9 415.6ZM560.2 363.7L604.4 363.7L592.1 387.3L543.9 387.3ZM648.6 363.7L692.8 363.7L688.4 387.3L640.3 387.3ZM737.0 363.7L781.2 363.7L784.8 387.3L736.6 387.3ZM825.4 363.7L869.6 363.7L881.1 387.3L832.9 387.3ZM913.7 363.7L957.9 363.7L977.4 387.3L929.3 387.3ZM533.2 343.7L574.0 343.7L560.2 363.7L516.0 363.7ZM614.8 343.7L655.6 343.7L648.6 363.7L604.4 363.7ZM696.5 343.7L737.3 343.7L737.0 363.7L692.8 363.7ZM778.1 343.7L818.9 343.7L825.4 363.7L781.2 363.7ZM859.8 343.7L900.6 343.7L913.7 363.7L869.6 363.7Z" fill="url(#tex2)"/><path d="M585.8 326.5L623.8 326.5L614.8 343.7L574.0 343.7ZM661.7 326.5L699.6 326.5L696.5 343.7L655.6 343.7ZM737.6 326.5L775.5 326.5L778.1 343.7L737.3 343.7ZM813.4 326.5L851.4 326.5L859.8 343.7L818.9 343.7ZM889.3 326.5L927.3 326.5L941.4 343.7L900.6 343.7ZM560.7 311.6L596.1 311.6L585.8 326.5L547.9 326.5ZM631.5 311.6L667.0 311.6L661.7 326.5L623.8 326.5ZM702.4 311.6L737.8 311.6L737.6 326.5L699.6 326.5ZM773.2 311.6L808.7 311.6L813.4 326.5L775.5 326.5ZM844.1 311.6L879.5 311.6L889.3 326.5L851.4 326.5ZM605.1 298.6L638.3 298.6L631.5 311.6L596.1 311.6ZM671.6 298.6L704.8 298.6L702.4 311.6L667.0 311.6ZM738.0 298.6L771.3 298.6L773.2 311.6L737.8 311.6ZM804.5 298.6L837.7 298.6L844.1 311.6L808.7 311.6ZM870.9 298.6L904.2 298.6L915.0 311.6L879.5 311.6ZM581.7 287.0L613.0 287.0L605.1 298.6L571.9 298.6ZM644.3 287.0L675.6 287.0L671.6 298.6L638.3 298.6ZM706.9 287.0L738.2 287.0L738.0 298.6L704.8 298.6ZM769.5 287.0L800.8 287.0L804.5 298.6L771.3 298.6ZM832.1 287.0L863.4 287.0L870.9 298.6L837.7 298.6Z" fill="#fff" opacity=".022"/><path d="M581.7 287.0L894.7 287.0L1110.0 548.0L358.0 548.0Z" fill="url(#fog)" /><path d="M358.0 548.0L1110.0 548.0L1099.4 575.0L368.6 575.0Z" fill="#2d2f35" /><path d="M358.0 548.0L433.2 548.0L441.7 575.0L368.6 575.0ZM508.4 548.0L583.6 548.0L587.8 575.0L514.8 575.0ZM658.8 548.0L734.0 548.0L734.0 575.0L660.9 575.0ZM809.2 548.0L884.4 548.0L880.2 575.0L807.1 575.0ZM959.6 548.0L1034.8 548.0L1026.3 575.0L953.3 575.0Z" fill="#3b3d44"/><path d="M358.0 548.0L433.2 548.0L441.7 575.0L368.6 575.0ZM508.4 548.0L583.6 548.0L587.8 575.0L514.8 575.0ZM658.8 548.0L734.0 548.0L734.0 575.0L660.9 575.0ZM809.2 548.0L884.4 548.0L880.2 575.0L807.1 575.0ZM959.6 548.0L1034.8 548.0L1026.3 575.0L953.3 575.0Z" fill="url(#tex)"/><path d="M360.7 545.5L1107.4 545.5L1108.4 552.0L359.6 552.0Z" fill="#fff" opacity=".075"/></g><g clip-path="url(#vpc)"><circle cx="632" cy="90" r="8" fill="#b9b9b9" stroke="#222" stroke-width="1.500"/><rect x="618.5" y="92" width="5" height="6" rx="1" fill="#f2f2f2" stroke="#1a1a1a" stroke-width="1.400" transform="rotate(60 621 95)"/><rect x="625.0" y="99" width="5" height="6" rx="1" fill="#f2f2f2" stroke="#1a1a1a" stroke-width="1.400" transform="rotate(25 627.5 102)"/><rect x="633.5" y="100.5" width="5" height="6" rx="1" fill="#f2f2f2" stroke="#1a1a1a" stroke-width="1.400" transform="rotate(-8 636 103.5)"/><rect x="641.5" y="95" width="5" height="6" rx="1" fill="#f2f2f2" stroke="#1a1a1a" stroke-width="1.400" transform="rotate(-40 644 98)"/><path d="M647 103 658.500 113" stroke="#f4f4f8" stroke-width="1.400" opacity=".9"/></g><path d="M686.500 143.500C685 120 700 109.500 719 109.500S753 120 752 143.500C742 135 730 133 719 133S696 135 686.500 143.500Z" fill="url(#dome)" stroke="#2a2a2a" stroke-width="2.200"/>
<path d="M687.500 142C686 120.500 701 110.500 719 110.500S752 120.500 751 142" fill="none" stroke="#e8e8e8" stroke-width="1.300"/>
<g stroke="#9c9c9c" stroke-width="2" fill="#9c9c9c"><path d="M709 116l2.500 8M730 116l-2.500 8M693 129l8 4M745 129l-8 4"/><path d="M709.500 121.500l4 .5-2 4zM729.500 121.500l-4 .5 2 4zM698 129.500l4.500 4-5.500.5zM740 129.500l-4.500 4 5.500.5z" stroke="none"/></g><defs><clipPath id="ballc"><circle cx="731.400" cy="257.900" r="11.200"/></clipPath><filter id="bb" x="-20%" y="-20%" width="140%" height="140%"><feGaussianBlur stdDeviation=".7"/></filter></defs><g filter="url(#bb)"><circle cx="731.400" cy="257.900" r="11.200" fill="#1c1c1e"/><g clip-path="url(#ballc)"><path d="M719 262q-1-12 9-16 5-2 6 1-4 3-5 8-2 1-3 5-3 5-7 2z" fill="#f2f2f4"/><path d="M733 246q6 0 9 6 2 5 0 9-1-7-5-10-2-3-4-5z" fill="#8a8a90"/><path d="M730 268q4-5 9-6 3-1 4-5 1 8-4 11-5 3-9 0z" fill="#fafafa"/><ellipse cx="732.500" cy="261.700" rx="2.300" ry="1.300" fill="#fff" transform="rotate(-15 732.500 261.700)"/><circle cx="728.600" cy="257" r="1.300" fill="#e8e8e8"/></g><circle cx="731.400" cy="257.900" r="11" fill="none" stroke="#55555a" stroke-width=".8"/></g><g><path d="M728 312.500l1.500 22" stroke="#b0b0b0" stroke-width="1.300"/><path d="M727.500 312.500l7.500 2.500-6.500 5z" fill="#a8a8a8"/><path d="M737.700 313v9" stroke="#5a9ad8" stroke-width="1.800"/>
<path d="M733.500 323.500q6-2.500 11-.5l2.500 9q-2 3-5-.5h-5q-1 3-4 2z" fill="#cfcfcf"/><path d="M735.500 325.500q4-1.500 7 0l.5 3.500h-8z" fill="#9e9e9e"/><ellipse cx="730.500" cy="336.800" rx="5" ry="2.300" fill="#dedede"/></g><g stroke-width="1.500"><path d="M282 548.500v-18" stroke="#4a58b8"/><path d="M282 548.300h23" stroke="#58c864"/></g>
<text x="284.300" y="533" font-size="8" font-weight="bold" fill="#3a48b0" font-family="Liberation Sans,sans-serif">Z</text>
<text x="284.300" y="543.800" font-size="8" font-weight="bold" fill="#e04848" font-family="Liberation Sans,sans-serif">X</text>
<text x="304" y="551" font-size="8" font-weight="bold" fill="#58c864" font-family="Liberation Sans,sans-serif">Y</text>
<circle cx="275" cy="556" r="3.600" fill="#b4b6c4" stroke="#6e707c" stroke-width="1"/><path d="M273.500 557.500l3-3" stroke="#6e707c" stroke-width="1"/><path d="M256.500 92.300H1224.500V571.800H256.500Z M260 93.500V570.300H1222V93.500Z" fill="#c3bba6" fill-rule="evenodd"/><rect x="256.300" y="92.300" width="1.500" height="479.500" fill="#3a3220"/><path d="M257 92h9l-9 9z" fill="#e0b63c"/></svg>
<div class="a" style="left:253.5px;top:571.8px;width:976px;height:6px;background:#1f1f1f;"></div>
<div class="a" style="left:261px;top:97px;width:18px;height:21px;background:rgba(222,222,228,.82);border:1px solid #8e8e98;border-radius:5px;box-shadow:inset 0 0 0 1px rgba(255,255,255,.55)"></div><svg class="a" style="left:267px;top:105px;" width="7" height="5" viewBox="0 0 7 5"><path d="M0 0h6.500L3.250 4z" fill="#1a1a1a"/></svg>
<div class="a" style="left:282px;top:97px;width:77px;height:21px;background:rgba(222,222,228,.82);border:1px solid #8e8e98;border-radius:5px;box-shadow:inset 0 0 0 1px rgba(255,255,255,.55)"></div><svg class="a" style="left:287.5px;top:101.5px;" width="15" height="11" viewBox="0 0 15 11"><path d="M1 6 9 1l5 2-8 6z" fill="#9bb8ee"/><path d="M1 6l5 3v2L1 8.500z" fill="#4f74c4"/><path d="M6 9l8-6v2.500L6 11z" fill="#6a8cd8"/></svg><div class="t" style="left:303.5px;top:103.0px;font-size:8.78px;color:#262626;font-weight:bold;">Perspective</div>
<div class="a" style="left:362px;top:97px;width:37px;height:21px;background:rgba(222,222,228,.82);border:1px solid #8e8e98;border-radius:5px;box-shadow:inset 0 0 0 1px rgba(255,255,255,.55)"></div><svg class="a" style="left:367px;top:100px;" width="12" height="14" viewBox="0 0 12 14"><path d="M1 3 6 1l5 2v7l-5 3-5-3z" fill="#4f74c4"/><path d="M1 3 6 1l5 2-5 2.500z" fill="#a8c0f0"/><path d="M6 5.500l5-2.500v7l-5 3z" fill="#3a5cb0"/></svg><div class="t" style="left:382.6px;top:102.7px;font-size:9.30px;color:#262626;font-weight:bold;">Lit</div>
<div class="a" style="left:402px;top:97px;width:36px;height:21px;background:rgba(222,222,228,.82);border:1px solid #8e8e98;border-radius:5px;box-shadow:inset 0 0 0 1px rgba(255,255,255,.55)"></div><div class="t" style="left:407.6px;top:102.7px;font-size:9.30px;color:#262626;font-weight:bold;">Show</div>
<div class="a" style="left:902.5px;top:97px;width:57.0px;height:20px;background:rgba(222,222,228,.85);border:1px solid #8e8e98;border-radius:5px;overflow:hidden;box-shadow:inset 0 0 0 1px rgba(255,255,255,.5)"><div class="a" style="left:-1.0px;top:-1px;width:19.0px;height:20px;background:#dfa040"></div></div>
<svg class="a" style="left:906px;top:101px;" width="12" height="12" viewBox="0 0 12 12"><path d="M6 0 8.500 3h-5zM6 12 3.500 9h5zM0 6l3-2.500v5zM12 6 9 3.500v5z" fill="#1a1a1a"/><rect x="4.200" y="4.200" width="3.600" height="3.600" fill="#5a2a10"/><path d="M6 2v8M2 6h8" stroke="#1a1a1a" stroke-width="1.400"/></svg>
<svg class="a" style="left:925px;top:101px;" width="12" height="12" viewBox="0 0 12 12"><path d="M9.800 3.200A4.600 4.600 0 1 0 10.600 7" fill="none" stroke="#4f74c4" stroke-width="2.400"/><path d="M7.500 1 12 2.500 9 6z" fill="#4f74c4"/></svg>
<svg class="a" style="left:944px;top:101px;" width="12" height="12" viewBox="0 0 12 12"><path d="M3 9 9 3" stroke="#4f74c4" stroke-width="2.200"/><path d="M6.500 0.500h5v5zM.5 6.500v5h5z" fill="#4f74c4"/></svg>
<div class="a" style="left:962.5px;top:97px;width:19.0px;height:20px;background:rgba(222,222,228,.85);border:1px solid #8e8e98;border-radius:5px;overflow:hidden;box-shadow:inset 0 0 0 1px rgba(255,255,255,.5)"></div>
<svg class="a" style="left:966px;top:100px;" width="12" height="13" viewBox="0 0 12 13"><path d="M0 4 6 1.500 12 4v6.500L6 13 0 10.500z" fill="#8c8c8c"/><path d="M0 4 6 1.500 12 4 6 6.500z" fill="#3a3a3a"/><path d="M6 6.500 12 4v6.500L6 13z" fill="#6e6e6e"/></svg>
<div class="a" style="left:984.5px;top:97px;width:64.5px;height:20px;background:rgba(222,222,228,.85);border:1px solid #8e8e98;border-radius:5px;overflow:hidden;box-shadow:inset 0 0 0 1px rgba(255,255,255,.5)"><div class="a" style="left:17.5px;top:-1px;width:1px;height:20px;background:#8e8e98"></div><div class="a" style="left:37.5px;top:-1px;width:1px;height:20px;background:#8e8e98"></div></div>
<svg class="a" style="left:988px;top:100px;" width="12" height="11" viewBox="0 0 12 11"><path d="M1 8q5-3 10-1" stroke="#555" stroke-width="1" fill="none"/><path d="M7 0v6M4.500 4 7 6.500 9.500 4" stroke="#4f74c4" stroke-width="1.300" fill="none"/><path d="M2 3l3 2M11 2 9 4" stroke="#888" stroke-width="1"/></svg>
<svg class="a" style="left:992px;top:113px;" width="5" height="3" viewBox="0 0 5 3"><path d="M0 0h4.500L2.250 2.500z" fill="#222"/></svg>
<svg class="a" style="left:1008px;top:101px;" width="12" height="12" viewBox="0 0 12 12"><rect x=".5" y=".5" width="11" height="11" fill="none" stroke="#1e1e1e" stroke-width="1"/><path d="M3.200 0v12M6 0v12M8.800 0v12M0 3.200h12M0 6h12M0 8.800h12" stroke="#1e1e1e" stroke-width=".9"/></svg>
<div class="t" style="left:1031.7px;top:101.6px;font-size:9.50px;color:#262626;font-weight:bold;">10</div>
<svg class="a" style="left:1035px;top:113px;" width="5" height="3" viewBox="0 0 5 3"><path d="M0 0h4.500L2.250 2.500z" fill="#222"/></svg>
<div class="a" style="left:1052.5px;top:97px;width:49.0px;height:20px;background:rgba(222,222,228,.85);border:1px solid #8e8e98;border-radius:5px;overflow:hidden;box-shadow:inset 0 0 0 1px rgba(255,255,255,.5)"><div class="a" style="left:-1.0px;top:-1px;width:19.0px;height:20px;background:#dfa040"></div></div>
<svg class="a" style="left:1056px;top:101px;" width="13" height="12" viewBox="0 0 13 12"><path d="M1.500 11 6 1.500 11.500 11z" fill="none" stroke="#1e1e1e" stroke-width="1.500"/><path d="M8 11a4 4 0 0 0-1.500-3" fill="none" stroke="#1e1e1e" stroke-width="1"/></svg>
<div class="t" style="left:1078.8px;top:101.6px;font-size:9.50px;color:#262626;font-weight:bold;">10°</div>
<svg class="a" style="left:1084px;top:113px;" width="5" height="3" viewBox="0 0 5 3"><path d="M0 0h4.500L2.250 2.500z" fill="#222"/></svg>
<div class="a" style="left:1106px;top:97px;width:53.5px;height:20px;background:rgba(222,222,228,.85);border:1px solid #8e8e98;border-radius:5px;overflow:hidden;box-shadow:inset 0 0 0 1px rgba(255,255,255,.5)"><div class="a" style="left:-1px;top:-1px;width:19px;height:20px;background:#dfa040"></div></div>
<svg class="a" style="left:1110px;top:101px;" width="12" height="12" viewBox="0 0 12 12"><path d="M2 10 9 3" stroke="#1a1a1a" stroke-width="2"/><path d="M5 1.500h5.500V7z" fill="#1a1a1a"/><rect x="1" y="8.500" width="2.500" height="2.500" fill="#1a1a1a"/></svg>
<div class="t" style="left:1133.8px;top:101.6px;font-size:9.50px;color:#262626;font-weight:bold;">0,25</div>
<svg class="a" style="left:1141px;top:113px;" width="5" height="3" viewBox="0 0 5 3"><path d="M0 0h4.500L2.250 2.500z" fill="#222"/></svg>
<div class="a" style="left:1163px;top:97px;width:38px;height:20px;background:rgba(222,222,228,.85);border:1px solid #8e8e98;border-radius:5px;overflow:hidden;box-shadow:inset 0 0 0 1px rgba(255,255,255,.5)"></div>
<svg class="a" style="left:1170px;top:101px;" width="15" height="12" viewBox="0 0 15 12"><path d="M5 2h7l2 2v5l-2 2H6z" fill="#3a3a3a"/><path d="M0 3h5M1 6h5M0 9h6" stroke="#3a3a3a" stroke-width="1.300"/></svg>
<div class="t" style="left:1188.4px;top:101.6px;font-size:9.50px;color:#262626;font-weight:bold;">4</div>
<svg class="a" style="left:1189px;top:113px;" width="5" height="3" viewBox="0 0 5 3"><path d="M0 0h4.500L2.250 2.500z" fill="#222"/></svg>
<svg class="a" style="left:1209px;top:103px;" width="9" height="9" viewBox="0 0 9 9"><rect x=".5" y=".5" width="8" height="8" fill="none" stroke="#f4f4f4" stroke-width="1"/><rect x="2.500" y="2.500" width="4" height="4" fill="#e8e8e8"/></svg>
<div class="a" style="left:1224.5px;top:38px;width:312px;height:826px;background:#1f1f1f;"></div>
<div class="a" style="left:1230px;top:273px;width:306px;height:4.5px;background:#1f1f1f;"></div>
<div class="a" style="left:1229.5px;top:55px;width:307px;height:218px;background:#3e3e3e;"></div>
<div class="a" style="left:1232px;top:38.6px;width:121px;height:16.4px;background:#3e3e3e;border-radius:3px 3px 0 0;"></div>
<svg class="a" style="left:1238px;top:40px;" width="12" height="11" viewBox="0 0 12 11"><g fill="#b9c8e4"><rect x="0" y="0" width="2" height="2"/><rect x="0" y="3" width="2" height="2"/><rect x="0" y="6" width="2" height="2"/><rect x="0" y="9" width="2" height="2"/><rect x="3" y="0" width="9" height="2"/><rect x="3" y="3" width="9" height="2"/><rect x="3" y="6" width="9" height="2"/><rect x="3" y="9" width="9" height="2"/></g></svg>
<div class="t" style="left:1255.0px;top:41.4px;font-size:9.70px;color:#d6d6d6;text-shadow:0 1px 0 rgba(0,0,0,.7);">World Outliner</div>
<div class="t" style="left:1339.0px;top:42.2px;font-size:7.70px;color:#555;">×</div>
<div class="a" style="left:1236px;top:63px;width:271px;height:15px;background:#cecece;border-radius:2px;border:1px solid #dcdcdc;border-top-color:#a4a4a4;"></div>
<div class="t" style="left:1240.0px;top:65.9px;font-size:9.30px;color:#9d9d9d;">Search...</div>
<svg class="a" style="left:1493px;top:64px;" width="13" height="13" viewBox="0 0 13 13"><circle cx="7.500" cy="5.500" r="3.800" fill="none" stroke="#111" stroke-width="1.800"/><path d="M4.800 8.200 1.500 11.500" stroke="#111" stroke-width="2.400" stroke-linecap="round"/></svg>
<svg class="a" style="left:1513px;top:64px;" width="14" height="13" viewBox="0 0 14 13"><path d="M6 3l6-2v7l-6 3z" fill="#8fb0e8"/><path d="M6 3l6-2 1 1-6 2.500z" fill="#cfe0fa"/><path d="M1 7h6M4 4v6" stroke="#f4f4f4" stroke-width="1.800"/></svg>
<div class="a" style="left:1236px;top:80px;width:293px;height:19px;background:linear-gradient(#161616,#222);"></div>
<div class="t" style="left:1252.0px;top:85.7px;font-size:9.70px;color:#d8d8d8;text-shadow:0 1px 0 rgba(0,0,0,.7);">Label</div>
<div class="t" style="left:1453.0px;top:85.7px;font-size:9.70px;color:#d8d8d8;text-shadow:0 1px 0 rgba(0,0,0,.7);">Type</div>
<svg class="a" style="left:1344px;top:82px;" width="8" height="5" viewBox="0 0 8 5"><path d="M0 4.500h7L3.500 0z" fill="#e0e0e0"/></svg>
<svg class="a" style="left:1519px;top:92px;" width="8" height="5" viewBox="0 0 8 5"><path d="M0 0h7L3.500 4z" fill="#777"/></svg>
<svg class="a" style="left:1237px;top:102px;" width="12" height="9" viewBox="0 0 12 9"><ellipse cx="6" cy="4.500" rx="5.300" ry="3.400" fill="#cfd8ec"/><ellipse cx="6" cy="4.500" rx="5.300" ry="3.400" fill="none" stroke="#5f7cc0" stroke-width=".9"/><ellipse cx="6" cy="4.800" rx="3" ry="2.300" fill="#3f5fa8"/><circle cx="6" cy="4.800" r="1.300" fill="#14182a"/></svg>
<svg class="a" style="left:1256px;top:104px;" width="6" height="6" viewBox="0 0 6 6"><path d="M5.500 0v5.500H0z" fill="#d0d0d0"/></svg>
<svg class="a" style="left:1263px;top:100px;" width="14" height="13" viewBox="0 0 14 13"><path d="M1 8 6 1l3 4 3-3 2 7-6 3z" fill="#d8d8d8"/><path d="M6 1l3 4-1 7z" fill="#9a9a9a"/></svg>
<div class="t" style="left:1281.0px;top:101.7px;font-size:9.70px;color:#d8d8d8;text-shadow:0 1px 0 rgba(0,0,0,.7);">Untitled (Editor)</div>
<div class="t" style="left:1450.0px;top:101.7px;font-size:9.70px;color:#858585;width:80px;overflow:hidden;padding-bottom:3px;">World</div>
<svg class="a" style="left:1237px;top:117px;" width="12" height="9" viewBox="0 0 12 9"><ellipse cx="6" cy="4.500" rx="5.300" ry="3.400" fill="#cfd8ec"/><ellipse cx="6" cy="4.500" rx="5.300" ry="3.400" fill="none" stroke="#5f7cc0" stroke-width=".9"/><ellipse cx="6" cy="4.800" rx="3" ry="2.300" fill="#3f5fa8"/><circle cx="6" cy="4.800" r="1.300" fill="#14182a"/></svg>
<svg class="a" style="left:1272px;top:115px;" width="14" height="13" viewBox="0 0 14 13"><circle cx="3" cy="2.500" r="2" fill="#e88a3a"/><path d="M2 10q0-3 3-3 1-3 4-2 3 0 3 3 2 0 2 2z" fill="#f0f0f0"/><path d="M1 8h9" stroke="#333" stroke-width="1"/></svg>
<div class="t" style="left:1290.5px;top:116.3px;font-size:9.70px;color:#d8d8d8;text-shadow:0 1px 0 rgba(0,0,0,.7);">Atmospheric Fog</div>
<div class="t" style="left:1450.0px;top:116.3px;font-size:9.70px;color:#858585;width:80px;overflow:hidden;padding-bottom:3px;">AtmosphericFog</div>
<svg class="a" style="left:1237px;top:131px;" width="12" height="9" viewBox="0 0 12 9"><ellipse cx="6" cy="4.500" rx="5.300" ry="3.400" fill="#cfd8ec"/><ellipse cx="6" cy="4.500" rx="5.300" ry="3.400" fill="none" stroke="#5f7cc0" stroke-width=".9"/><ellipse cx="6" cy="4.800" rx="3" ry="2.300" fill="#3f5fa8"/><circle cx="6" cy="4.800" r="1.300" fill="#14182a"/></svg>
<svg class="a" style="left:1272px;top:129px;" width="14" height="13" viewBox="0 0 14 13"><path d="M2 11V5l5-3.500L12 5v6h-3V7H5v4z" fill="#e4e4e4"/><path d="M7 1.500 12 5v6" fill="none" stroke="#888" stroke-width="1"/></svg>
<div class="t" style="left:1290.5px;top:130.9px;font-size:9.70px;color:#d8d8d8;text-shadow:0 1px 0 rgba(0,0,0,.7);">Floor</div>
<div class="t" style="left:1450.0px;top:130.9px;font-size:9.70px;color:#858585;width:80px;overflow:hidden;padding-bottom:3px;">StaticMeshActor</div>
<svg class="a" style="left:1237px;top:146px;" width="12" height="9" viewBox="0 0 12 9"><ellipse cx="6" cy="4.500" rx="5.300" ry="3.400" fill="#cfd8ec"/><ellipse cx="6" cy="4.500" rx="5.300" ry="3.400" fill="none" stroke="#5f7cc0" stroke-width=".9"/><ellipse cx="6" cy="4.800" rx="3" ry="2.300" fill="#3f5fa8"/><circle cx="6" cy="4.800" r="1.300" fill="#14182a"/></svg>
<svg class="a" style="left:1272px;top:144px;" width="14" height="13" viewBox="0 0 14 13"><circle cx="2.500" cy="2.500" r="2" fill="#f0d040"/><circle cx="9" cy="6" r="2.800" fill="#f4f4f4"/><g stroke="#f4f4f4" stroke-width="1.200"><path d="M9 1v2M9 9v2M4 6h2M12 6h2M5.500 2.500l1.500 1.500M12.500 2.500 11 4M5.500 9.500 7 8M12.500 9.500 11 8"/></g><path d="M1 11l5-4" stroke="#ddd" stroke-width="1.500"/></svg>
<div class="t" style="left:1290.5px;top:145.5px;font-size:9.70px;color:#d8d8d8;text-shadow:0 1px 0 rgba(0,0,0,.7);">Light Source</div>
<div class="t" style="left:1450.0px;top:145.5px;font-size:9.70px;color:#858585;width:80px;overflow:hidden;padding-bottom:3px;">DirectionalLight</div>
<svg class="a" style="left:1237px;top:160px;" width="12" height="9" viewBox="0 0 12 9"><ellipse cx="6" cy="4.500" rx="5.300" ry="3.400" fill="#cfd8ec"/><ellipse cx="6" cy="4.500" rx="5.300" ry="3.400" fill="none" stroke="#5f7cc0" stroke-width=".9"/><ellipse cx="6" cy="4.800" rx="3" ry="2.300" fill="#3f5fa8"/><circle cx="6" cy="4.800" r="1.300" fill="#14182a"/></svg>
<svg class="a" style="left:1272px;top:158px;" width="14" height="13" viewBox="0 0 14 13"><path d="M3 1v10" stroke="#eee" stroke-width="1.200"/><path d="M3 1l5 2-5 2z" fill="#ddd"/><path d="M5 7q4-2 7 0l1 4q-1 1-3-1H7q-1 2-3 1z" fill="#f0f0f0"/></svg>
<div class="t" style="left:1290.5px;top:160.0px;font-size:9.70px;color:#d8d8d8;text-shadow:0 1px 0 rgba(0,0,0,.7);">Player Start</div>
<div class="t" style="left:1450.0px;top:160.0px;font-size:9.70px;color:#858585;width:80px;overflow:hidden;padding-bottom:3px;">PlayerStart</div>
<svg class="a" style="left:1237px;top:175px;" width="12" height="9" viewBox="0 0 12 9"><ellipse cx="6" cy="4.500" rx="5.300" ry="3.400" fill="#cfd8ec"/><ellipse cx="6" cy="4.500" rx="5.300" ry="3.400" fill="none" stroke="#5f7cc0" stroke-width=".9"/><ellipse cx="6" cy="4.800" rx="3" ry="2.300" fill="#3f5fa8"/><circle cx="6" cy="4.800" r="1.300" fill="#14182a"/></svg>
<svg class="a" style="left:1272px;top:173px;" width="14" height="13" viewBox="0 0 14 13"><circle cx="7" cy="6.500" r="5" fill="#f2f2f2"/><circle cx="5.500" cy="5" r="2" fill="#fff"/></svg>
<div class="t" style="left:1290.5px;top:174.6px;font-size:9.70px;color:#d8d8d8;text-shadow:0 1px 0 rgba(0,0,0,.7);">Sky Sphere</div>
<div class="t" style="left:1451.0px;top:174.6px;font-size:9.70px;color:#8fb4ee;text-decoration:underline;width:79px;overflow:hidden;padding-bottom:3px;">Edit BP_Sky_Sph</div>
<svg class="a" style="left:1237px;top:189px;" width="12" height="9" viewBox="0 0 12 9"><ellipse cx="6" cy="4.500" rx="5.300" ry="3.400" fill="#cfd8ec"/><ellipse cx="6" cy="4.500" rx="5.300" ry="3.400" fill="none" stroke="#5f7cc0" stroke-width=".9"/><ellipse cx="6" cy="4.800" rx="3" ry="2.300" fill="#3f5fa8"/><circle cx="6" cy="4.800" r="1.300" fill="#14182a"/></svg>
<svg class="a" style="left:1272px;top:187px;" width="14" height="13" viewBox="0 0 14 13"><path d="M1 9.500a6 6 0 0 1 12 0q-6-4-12 0z" fill="#555" stroke="#eee" stroke-width="1.200"/><path d="M5 5l1 2M9 5l-1 2" stroke="#eee" stroke-width="1"/></svg>
<div class="t" style="left:1290.5px;top:189.2px;font-size:9.70px;color:#d8d8d8;text-shadow:0 1px 0 rgba(0,0,0,.7);">SkyLight</div>
<div class="t" style="left:1450.0px;top:189.2px;font-size:9.70px;color:#858585;width:80px;overflow:hidden;padding-bottom:3px;">SkyLight</div>
<svg class="a" style="left:1237px;top:204px;" width="12" height="9" viewBox="0 0 12 9"><ellipse cx="6" cy="4.500" rx="5.300" ry="3.400" fill="#cfd8ec"/><ellipse cx="6" cy="4.500" rx="5.300" ry="3.400" fill="none" stroke="#5f7cc0" stroke-width=".9"/><ellipse cx="6" cy="4.800" rx="3" ry="2.300" fill="#3f5fa8"/><circle cx="6" cy="4.800" r="1.300" fill="#14182a"/></svg>
<svg class="a" style="left:1272px;top:202px;" width="14" height="13" viewBox="0 0 14 13"><circle cx="7" cy="7" r="5.200" fill="#3a3a3a" stroke="#f0f0f0" stroke-width="1.400"/><path d="M3.500 8a4 4 0 0 1 5-4.500" stroke="#f0f0f0" stroke-width="1.600" fill="none"/><path d="M7 8l4 3" stroke="#f0f0f0" stroke-width="1.500"/></svg>
<div class="t" style="left:1290.5px;top:203.7px;font-size:9.70px;color:#d8d8d8;text-shadow:0 1px 0 rgba(0,0,0,.7);">SphereReflectionCapture</div>
<div class="t" style="left:1450.0px;top:203.7px;font-size:9.70px;color:#858585;width:80px;overflow:hidden;padding-bottom:3px;">SphereReflectionC</div>
<div class="a" style="left:1236px;top:244px;width:293px;height:1px;background:#4e4e4e;"></div>
<div class="t" style="left:1242.0px;top:251.7px;font-size:9.70px;color:#d8d8d8;text-shadow:0 1px 0 rgba(0,0,0,.7);">7 actors</div>
<svg class="a" style="left:1445px;top:252.5px;" width="13" height="8" viewBox="0 0 13 8"><path d="M0 4q6.500-7 13 0-6.500 7-13 0z" fill="#d8d8d8"/><circle cx="6.500" cy="4" r="2.400" fill="#3e3e3e"/><circle cx="6.500" cy="4" r="1.100" fill="#d8d8d8"/></svg>
<div class="t" style="left:1461.0px;top:251.7px;font-size:9.70px;color:#d8d8d8;text-shadow:0 1px 0 rgba(0,0,0,.7);">View Options</div>
<svg class="a" style="left:1520px;top:255.0px;" width="7" height="4" viewBox="0 0 7 4"><path d="M0 0h6.500L3.250 3.800z" fill="#d0d0d0"/></svg>
<div class="a" style="left:1229.5px;top:294px;width:307px;height:570px;background:#3e3e3e;"></div>
<div class="a" style="left:1231px;top:277.5px;width:121px;height:17px;background:#3e3e3e;border-radius:3px 3px 0 0;"></div>
<div class="a" style="left:1352.5px;top:277.5px;width:120.5px;height:17px;background:#2e2e2e;border-radius:3px 3px 0 0;"></div>
<svg class="a" style="left:1238px;top:279px;" width="12" height="12" viewBox="0 0 12 12"><circle cx="6" cy="6" r="5.500" fill="#26324f" stroke="#8aa4dc" stroke-width="1"/><rect x="5.200" y="5" width="1.800" height="4.500" fill="#e8eefa"/><circle cx="6" cy="3.200" r="1.100" fill="#e8eefa"/></svg>
<div class="t" style="left:1255.0px;top:280.0px;font-size:9.70px;color:#d6d6d6;text-shadow:0 1px 0 rgba(0,0,0,.7);">Details</div>
<div class="t" style="left:1339.0px;top:281.2px;font-size:7.70px;color:#555;">×</div>
<svg class="a" style="left:1358px;top:279px;" width="13" height="13" viewBox="0 0 13 13"><defs><radialGradient id="glb" cx=".4" cy=".35" r=".7"><stop offset="0" stop-color="#fff"/><stop offset=".5" stop-color="#a8c4f4"/><stop offset="1" stop-color="#3f66c0"/></radialGradient></defs><circle cx="6.500" cy="6.500" r="6" fill="url(#glb)"/></svg>
<div class="t" style="left:1375.5px;top:280.0px;font-size:9.70px;color:#d6d6d6;text-shadow:0 1px 0 rgba(0,0,0,.7);">World Settings</div>
<div class="t" style="left:1459.0px;top:281.2px;font-size:7.70px;color:#4a4a4a;">×</div>
<div class="t" style="left:1314.6px;top:315.7px;font-size:9.70px;color:#d8d8d8;text-shadow:0 1px 0 rgba(0,0,0,.7);">Select an object to view details.</div>
<div class="a" style="left:1260px;top:769px;width:264px;height:51px;background:linear-gradient(#262626,#141414);border:1px solid #101010;box-shadow:0 0 3px rgba(0,0,0,.6);"></div>
<svg class="a" style="left:1277px;top:782.5px;" width="26" height="25" viewBox="0 0 24 23"><path d="M12 1.500 22.500 21h-21z" fill="#6e6e6e" stroke="#3a3a3a" stroke-width="1"/><rect x="11" y="8" width="2" height="7.500" fill="#e8e8e8"/><rect x="11" y="17" width="2" height="2" fill="#e8e8e8"/></svg>
<div class="t" style="left:1314.0px;top:777.7px;font-size:15.82px;color:#f0f0f0;font-weight:bold;text-shadow:0 1px 0 rgba(0,0,0,.7);">New plugins are available</div>
<div class="a" style="left:1314px;top:798px;width:86px;height:16px;background:linear-gradient(#dcdcdc,#c4c4c4);border:1px solid #8a8a8a;border-radius:2px;"></div>
<div class="t" style="left:1318.5px;top:801.3px;font-size:9.68px;color:#1a1a1a;">Manage Plugins...</div>
<div class="a" style="left:1405px;top:798px;width:42px;height:16px;background:linear-gradient(#dcdcdc,#c4c4c4);border:1px solid #8a8a8a;border-radius:2px;"></div>
<div class="t" style="left:1409.0px;top:801.3px;font-size:9.57px;color:#1a1a1a;">Dismiss</div>
<div class="a" style="left:0px;top:577px;width:1229.5px;height:18px;background:#1f1f1f;"></div>
<div class="a" style="left:0px;top:594px;width:1224.5px;height:270px;background:#3e3e3e;"></div>
<div class="a" style="left:1224.5px;top:577px;width:5px;height:287px;background:#1f1f1f;"></div>
<div class="a" style="left:3px;top:576px;width:118px;height:19px;background:#3e3e3e;border-radius:3px 3px 0 0;"></div>
<div class="a" style="left:123px;top:576px;width:119px;height:19px;background:#2e2e2e;border-radius:3px 3px 0 0;"></div>
<svg class="a" style="left:8px;top:580px;" width="13" height="12" viewBox="0 0 13 12"><rect width="13" height="3" fill="#8fb0e8"/><g fill="#c4d2ee"><rect y="4" width="3.500" height="2"/><rect x="4.500" y="4" width="8.500" height="2"/><rect y="7" width="3.500" height="2"/><rect x="4.500" y="7" width="8.500" height="2"/><rect y="10" width="3.500" height="2"/><rect x="4.500" y="10" width="8.500" height="2"/></g></svg>
<div class="t" style="left:25.0px;top:581.0px;font-size:9.70px;color:#d6d6d6;text-shadow:0 1px 0 rgba(0,0,0,.7);">Content Browser</div>
<div class="t" style="left:110.0px;top:581.7px;font-size:7.70px;color:#555;">×</div>
<svg class="a" style="left:129px;top:579px;" width="12" height="14" viewBox="0 0 12 14"><path d="M1 0h7l3.500 3.500V14H1z" fill="#dfe8fa"/><path d="M8 0l3.500 3.500H8z" fill="#8aa4dc"/><rect x="2" y="5" width="8" height="7.500" fill="#2e4f9a"/><path d="M3.500 6.500 6 8.500 3.500 10.500M6.500 11h2.500" stroke="#fff" stroke-width="1.100" fill="none"/></svg>
<div class="t" style="left:146.0px;top:581.0px;font-size:9.70px;color:#c8c8c8;text-shadow:0 1px 0 rgba(0,0,0,.7);">Output Log</div>
<div class="t" style="left:231.0px;top:581.7px;font-size:7.70px;color:#4a4a4a;">×</div>
<div class="a" style="left:0px;top:622.7px;width:1224.5px;height:4px;background:#262626;"></div>
<div class="a" style="left:4px;top:599px;width:85px;height:22px;background:linear-gradient(#5cb85c,#3f9a42);border:1px solid #2f7a33;border-radius:2px;box-shadow:inset 0 1px 0 rgba(255,255,255,.25);"></div>
<svg class="a" style="left:10px;top:602px;" width="11" height="15" viewBox="0 0 11 15"><path d="M0 0h7l4 4v11H0z" fill="#f6f6f6"/><path d="M7 0v4h4z" fill="#b9d8ba"/></svg>
<div class="t" style="left:25.0px;top:604.0px;font-size:11.20px;color:#fff;font-weight:bold;text-shadow:0 1px 0 rgba(0,0,0,.7);">Add New</div>
<svg class="a" style="left:77px;top:608px;" width="7" height="4" viewBox="0 0 7 4"><path d="M0 0h6.500L3.250 3.800z" fill="#e8f4e8"/></svg>
<svg class="a" style="left:100.5px;top:603.5px;" width="12" height="11" viewBox="0 0 13 12"><path d="M5 0h3v4.500h3L6.500 9 2 4.500h3z" fill="#e8e8e8"/><path d="M0 8v4h13V8h-2v2H2V8z" fill="#e8e8e8"/></svg>
<div class="t" style="left:116.0px;top:604.0px;font-size:11.20px;color:#eaeaea;font-weight:bold;text-shadow:0 1px 0 rgba(0,0,0,.7);">Import</div>
<svg class="a" style="left:168px;top:604px;" width="12" height="11" viewBox="0 0 12 11"><path d="M0 0h9.500L12 2.500V11H0z" fill="#e4e4e4"/><rect x="2.500" y="1.200" width="5.500" height="3.300" fill="#3e3e3e"/><rect x="2" y="6.200" width="8" height="3.600" fill="#3e3e3e"/><rect x="5.800" y="1.600" width="1.400" height="2.400" fill="#e4e4e4"/></svg>
<div class="t" style="left:183.0px;top:604.0px;font-size:11.20px;color:#eaeaea;font-weight:bold;text-shadow:0 1px 0 rgba(0,0,0,.7);">Save All</div>
<svg class="a" style="left:245px;top:604px;" width="12" height="11" viewBox="0 0 12 11"><path d="M6 .5.800 5.500 6 10.500V7.300h5.500V3.700H6z" fill="#ececec"/></svg>
<svg class="a" style="left:260px;top:604px;" width="12" height="11" viewBox="0 0 12 11"><path d="M6 .5l5.200 5L6 10.500V7.300H.5V3.700H6z" fill="#8a8a8a"/></svg>
<div class="a" style="left:278px;top:598px;width:1px;height:24px;background:#5a5a5a;"></div>
<svg class="a" style="left:285px;top:603px;" width="15" height="12" viewBox="0 0 15 12"><path d="M0 1.500h5l1.500 1.500H12v2H3L0 11z" fill="#e8e8e8"/><path d="M3.500 5.500H15L12 12H.5z" fill="#f4f4f4"/></svg>
<div class="t" style="left:307.0px;top:604.0px;font-size:11.20px;color:#f0f0f0;font-weight:bold;text-shadow:0 1px 0 rgba(0,0,0,.7);">Content</div>
<svg class="a" style="left:360px;top:606px;" width="5" height="8" viewBox="0 0 5 8"><path d="M0 0l4.500 4L0 8z" fill="#e8e8e8"/></svg>
<div class="t" style="left:375.0px;top:604.0px;font-size:11.20px;color:#f0f0f0;font-weight:bold;text-shadow:0 1px 0 rgba(0,0,0,.7);">CarGame</div>
<svg class="a" style="left:436px;top:606px;" width="5" height="8" viewBox="0 0 5 8"><path d="M0 0l4.500 4L0 8z" fill="#e8e8e8"/></svg>
<div class="t" style="left:451.0px;top:604.0px;font-size:11.20px;color:#f0f0f0;font-weight:bold;text-shadow:0 1px 0 rgba(0,0,0,.7);">Core</div>
<svg class="a" style="left:1207px;top:604px;" width="11" height="12" viewBox="0 0 11 12"><path d="M1.500 5V2.500a2 2 0 0 1 4 0" fill="none" stroke="#d8d8d8" stroke-width="1.300"/><rect x="3.500" y="6" width="7" height="5.500" fill="#e8e8e8"/><rect x="6.300" y="7.500" width="1.400" height="2.500" fill="#333"/></svg>
<div class="a" style="left:305px;top:626px;width:4px;height:238px;background:#2a2a2a;"></div>
<svg class="a" style="left:6px;top:631px;" width="14" height="12" viewBox="0 0 14 12"><g fill="#e4e4e4"><rect x="0" y="0" width="2" height="2"/><rect x="4" y="0" width="10" height="2"/><rect x="7" y="3.300" width="7" height="2"/><rect x="7" y="6.600" width="7" height="2"/><rect x="4" y="10" width="10" height="2"/><path d="M5.500 3 1 6l4.500 3z"/></g></svg>
<div class="a" style="left:23px;top:629px;width:263px;height:15px;background:#cecece;border-radius:2px;border:1px solid #dcdcdc;border-top-color:#a4a4a4;"></div>
<div class="t" style="left:27.0px;top:631.8px;font-size:9.50px;color:#9d9d9d;">Search Paths</div>
<svg class="a" style="left:272px;top:630px;" width="13" height="13" viewBox="0 0 13 13"><circle cx="7.500" cy="5.500" r="3.800" fill="none" stroke="#111" stroke-width="1.800"/><path d="M4.800 8.200 1.500 11.500" stroke="#111" stroke-width="2.400" stroke-linecap="round"/></svg>
<svg class="a" style="left:290px;top:630px;" width="13" height="13" viewBox="0 0 13 13"><rect x=".7" y=".7" width="11.600" height="11.600" fill="#3a3a3a" stroke="#e8e8e8" stroke-width="1.400"/><path d="M3 3.800h7M3 6.500h7M3 9.200h7" stroke="#e8e8e8" stroke-width="1.300"/></svg>
<div class="a" style="left:4px;top:647px;width:301px;height:16px;background:#575757;"></div>
<div class="a" style="left:4px;top:663px;width:301px;height:13px;background:#575757;"></div>
<div class="a" style="left:4px;top:689px;width:301px;height:13px;background:#8c8c8c;"></div>
<svg class="a" style="left:6px;top:651px;" width="5" height="5" viewBox="0 0 5 5"><path d="M5 0v5H0z" fill="#d0d0d0"/></svg>
<svg class="a" style="left:12px;top:650px;" width="14" height="11" viewBox="0 0 13 10"><path d="M0 1h4l1 1.200h5.500V4H2.500L0 9.500z" fill="#d0d0d0"/><path d="M2.800 4H13L10.500 10H.3z" fill="#e6e6e6"/></svg>
<div class="t" style="left:28.0px;top:649.1px;font-size:13.00px;color:#d2d2d2;text-shadow:0 1px 0 rgba(0,0,0,.7);">Content</div>
<svg class="a" style="left:14px;top:665px;" width="5" height="5" viewBox="0 0 5 5"><path d="M5 0v5H0z" fill="#d0d0d0"/></svg>
<svg class="a" style="left:20px;top:665px;" width="13" height="10" viewBox="0 0 13 10"><path d="M0 1h4l1 1.200h5.500V4H2.500L0 9.500z" fill="#d0d0d0"/><path d="M2.800 4H13L10.500 10H.3z" fill="#e6e6e6"/></svg>
<div class="t" style="left:36.0px;top:664.8px;font-size:10.20px;color:#cccccc;text-shadow:0 1px 0 rgba(0,0,0,.7);">CarGame</div>
<svg class="a" style="left:21px;top:679px;" width="5" height="7" viewBox="0 0 5 7"><path d="M.5.500 4 3.500.5 6.500z" fill="none" stroke="#c0c0c0" stroke-width=".9"/></svg>
<svg class="a" style="left:29px;top:678px;" width="13" height="10" viewBox="0 0 13 10"><path d="M0 .8h4.500l1 1.200H13V10H0z" fill="#e6e6e6"/><path d="M0 3h13" stroke="#bdbdbd" stroke-width=".6"/></svg>
<div class="t" style="left:44.0px;top:677.8px;font-size:10.20px;color:#c8c8c8;text-shadow:0 1px 0 rgba(0,0,0,.7);">Cars</div>
<svg class="a" style="left:29px;top:691px;" width="13" height="10" viewBox="0 0 13 10"><path d="M0 .8h4.500l1 1.200H13V10H0z" fill="#d0d0d0"/><path d="M0 3h13" stroke="#bdbdbd" stroke-width=".6"/></svg>
<svg class="a" style="left:29px;top:691px;" width="13" height="10" viewBox="0 0 13 10"><path d="M.5 1.300h4l1 1.200h7v7H.5z" fill="#8c8c8c" stroke="#2a2a2a" stroke-width=".9"/></svg>
<div class="t" style="left:44.0px;top:690.8px;font-size:10.20px;color:#1c1c1c;">Core</div>
<svg class="a" style="left:29px;top:704px;" width="13" height="10" viewBox="0 0 13 10"><path d="M0 .8h4.500l1 1.200H13V10H0z" fill="#e6e6e6"/><path d="M0 3h13" stroke="#bdbdbd" stroke-width=".6"/></svg>
<div class="t" style="left:44.0px;top:703.7px;font-size:10.20px;color:#c8c8c8;text-shadow:0 1px 0 rgba(0,0,0,.7);">Env</div>
<svg class="a" style="left:29px;top:717px;" width="13" height="10" viewBox="0 0 13 10"><path d="M0 .8h4.500l1 1.200H13V10H0z" fill="#e6e6e6"/><path d="M0 3h13" stroke="#bdbdbd" stroke-width=".6"/></svg>
<div class="t" style="left:44.0px;top:716.7px;font-size:10.20px;color:#c8c8c8;text-shadow:0 1px 0 rgba(0,0,0,.7);">Maps</div>
<svg class="a" style="left:317px;top:632px;" width="9" height="8" viewBox="0 0 9 8"><path d="M0 0h9L5.500 3.800V8L3.500 7V3.800z" fill="#e4e4e4"/></svg>
<div class="t" style="left:326.5px;top:631.7px;font-size:9.30px;color:#e4e4e4;font-weight:bold;text-shadow:0 1px 0 rgba(0,0,0,.7);">Filters</div>
<svg class="a" style="left:355px;top:635px;" width="7" height="4" viewBox="0 0 7 4"><path d="M0 0h6.500L3.250 3.800z" fill="#e0e0e0"/></svg>
<div class="a" style="left:369px;top:629px;width:838.5px;height:15px;background:#cecece;border-radius:2px;border:1px solid #dcdcdc;border-top-color:#a4a4a4;"></div>
<div class="t" style="left:373.0px;top:632.3px;font-size:9.50px;color:#9d9d9d;">Search Core</div>
<svg class="a" style="left:1194px;top:630px;" width="13" height="13" viewBox="0 0 13 13"><circle cx="7.500" cy="5.500" r="3.800" fill="none" stroke="#111" stroke-width="1.800"/><path d="M4.800 8.200 1.500 11.500" stroke="#111" stroke-width="2.400" stroke-linecap="round"/></svg>
<svg class="a" style="left:1210px;top:631px;" width="9" height="9" viewBox="0 0 9 9"><path d="M.5.500h6.500L8.500 2v6.500h-8z" fill="none" stroke="#777" stroke-width="1"/><rect x="2" y="1" width="4" height="2.500" fill="#777"/><rect x="2" y="5" width="5" height="3" fill="#666"/></svg>
<svg width="0" height="0" class="a"><defs>
<radialGradient id="bpbg" cx=".5" cy=".45" r=".75"><stop offset="0" stop-color="#273d69"/><stop offset="1" stop-color="#20335c"/></radialGradient>
<radialGradient id="cvbg" cx=".5" cy=".45" r=".75"><stop offset="0" stop-color="#2d2149"/><stop offset="1" stop-color="#271b41"/></radialGradient>
<radialGradient id="stbg" cx=".5" cy=".45" r=".75"><stop offset="0" stop-color="#33565d"/><stop offset="1" stop-color="#2c4c53"/></radialGradient>
<linearGradient id="carbg" x1="0" y1="0" x2="0" y2="1"><stop offset="0" stop-color="#c2c8d0"/><stop offset=".45" stop-color="#b4babf"/><stop offset="1" stop-color="#9fa5aa"/></linearGradient>
<linearGradient id="carb" x1="0" y1="0" x2="0" y2="1"><stop offset="0" stop-color="#ffb52e"/><stop offset="1" stop-color="#e07a10"/></linearGradient>
<linearGradient id="plate" x1="0" y1="0" x2="1" y2="1"><stop offset="0" stop-color="#ffffff"/><stop offset="1" stop-color="#b4b4b4"/></linearGradient>
</defs></svg>
<div class="a" style="left:313px;top:648px;width:125px;height:127px;background:#333;box-shadow:0 0 3px rgba(0,0,0,.5)"></div>
<svg class="a" style="left:315px;top:650.7px;" width="121" height="121.3" viewBox="0 0 121 122"><rect width="120" height="118" fill="url(#carbg)"/>
<g opacity=".38" fill="#878e94"><path d="M0 62l40-5 30 5-38 6zM70 62l30-4 20 3v5l-18 4zM0 84l34-8 42 6-44 11H0zM76 82l32-6 12 2v12l-12 3zM0 104l30-9 46 8-40 15H0zM76 103l32-7 12 3v19H96z"/></g>
<ellipse cx="60" cy="80" rx="49" ry="6.500" fill="#4a4e52" opacity=".5"/>
<path d="M11.500 60l1.500-3 9-2 10-3 4-2.500 8-.8 8 .3 4 2.500 4 3.500 20 2 15 4 10 7 3 4-1 5-9 5-8 1-20-3-30-5-20-5-8-4z" fill="url(#carb)"/>
<path d="M20 62l22 2 30 5 22 2 12 3" stroke="#ffd070" stroke-width="1.500" fill="none" opacity=".6"/>
<path d="M12 64l8 4 20 5 30 5 20 3 8-1 9-5 .5-3-9 4-8 1-20-3-30-5-20-4z" fill="#b9520c" opacity=".7"/>
<path d="M33 53l5-3.500 14-.5 5 2.500-7 .5-10 0z" fill="#3c3c3e"/>
<path d="M34 54.500l22-2.500 6 4-10 3.500-12-2z" fill="#2a2320"/>
<path d="M52 51.500l2-1.500 6 5-2 1z" fill="#d8dce0"/>
<circle cx="26" cy="72" r="6.800" fill="#2c2c2e"/><circle cx="26" cy="72" r="4.300" fill="#aab2b6"/><circle cx="26" cy="72" r="1.500" fill="#6e767a"/>
<circle cx="77" cy="77.500" r="7.400" fill="#2c2c2e"/><circle cx="77" cy="77.500" r="4.800" fill="#aab2b6"/><circle cx="77" cy="77.500" r="1.700" fill="#6e767a"/>
<g transform="translate(109,103)"><circle cx="3" cy="2" r="1.800" fill="#f0f0f0"/><ellipse cx="3" cy="6" rx="2.300" ry="2" fill="#e8e8e8"/><ellipse cx="3" cy="10" rx="3" ry="2.300" fill="#e8e8e8"/><path d="M.5 3.800h5M0 8h6" stroke="#555" stroke-width=".8"/></g><rect y="118" width="121" height="3.500" fill="#3f7be0"/></svg>
<div class="t" style="left:358.4px;top:784.6px;font-size:9.50px;color:#d0d0d0;text-shadow:0 1px 0 rgba(0,0,0,.7);">BP_Car</div>
<div class="a" style="left:441px;top:648px;width:125px;height:127px;background:#333;box-shadow:0 0 3px rgba(0,0,0,.5)"></div>
<svg class="a" style="left:443px;top:650.7px;" width="121" height="121.3" viewBox="0 0 121 122"><rect width="120" height="118" fill="url(#bpbg)"/><ellipse cx="62" cy="81" rx="27" ry="6" fill="#0e1830" opacity=".75"/>
<rect x="34.500" y="38.500" width="50.500" height="34.500" rx="1.500" fill="#ececec"/><rect x="37" y="41" width="45.500" height="29.500" fill="#26262a"/>
<rect x="48.500" y="75" width="23" height="7" fill="#bdbdbd"/><rect x="48.500" y="75" width="23" height="1.500" fill="#8a8a8a"/>
<path d="M41 63q1-16 7-18 12-4 24 0 6 2 7 18-4 7-9-2H50q-5 9-9 2z" fill="#cfcfcf"/><path d="M41.500 61q1-14.500 7-16.500 11.500-3.500 23 0" fill="none" stroke="#f6f6f6" stroke-width="1.600"/>
<path d="M46.500 51h6M49.500 48v6" stroke="#f6f6f6" stroke-width="2"/><circle cx="70" cy="49" r="1.500" fill="#f6f6f6"/><circle cx="73" cy="52" r="1.500" fill="#f6f6f6"/><circle cx="67" cy="52" r="1.500" fill="#f6f6f6"/><circle cx="57" cy="50" r="1.200" fill="#eee"/><circle cx="62" cy="50" r="1.200" fill="#eee"/><rect y="118" width="121" height="3.500" fill="#3f7be0"/></svg>
<div class="t" style="left:469.2px;top:784.6px;font-size:9.50px;color:#d0d0d0;text-shadow:0 1px 0 rgba(0,0,0,.7);">BP_GameMode</div>
<div class="a" style="left:569px;top:648px;width:125px;height:127px;background:#333;box-shadow:0 0 3px rgba(0,0,0,.5)"></div>
<svg class="a" style="left:571px;top:650.7px;" width="121" height="121.3" viewBox="0 0 121 122"><rect width="120" height="118" fill="url(#bpbg)"/><path d="M56 78q14-8 26-3-2 7-16 8z" fill="#0e1830" opacity=".8"/>
<path d="M42 39.500l3.500-3.500 33 15.500-3 4z" fill="#cdcdcd"/><path d="M76.500 35.500l3 3.500-33 16.500-3.500-4z" fill="#ededed"/>
<circle cx="60" cy="60.500" r="7.500" fill="#b9b9b9"/><circle cx="58" cy="58.500" r="3.500" fill="#e4e4e4"/><path d="M58 67h4l4.500 17.500q-6.500 3-13 0z" fill="#f2f2f2"/><path d="M58 67h4l1.200 7h-6.400z" fill="#b4b4b4"/><rect y="118" width="121" height="3.500" fill="#3f7be0"/></svg>
<div class="t" style="left:588.0px;top:784.6px;font-size:9.50px;color:#d0d0d0;text-shadow:0 1px 0 rgba(0,0,0,.7);">BP_PlayerController</div>
<div class="a" style="left:697px;top:648px;width:125px;height:127px;background:#333;box-shadow:0 0 3px rgba(0,0,0,.5)"></div>
<svg class="a" style="left:699px;top:650.7px;" width="121" height="121.3" viewBox="0 0 121 122"><rect width="120" height="118" fill="url(#cvbg)"/><path d="M40.500 82V42.500h39" stroke="#7a6f8c" stroke-width="1.800" fill="none"/>
<path d="M44 82.500A38 38 0 0 0 80.500 46" stroke="#ece8f2" stroke-width="2.600" fill="none"/><circle cx="40" cy="82" r="3.300" fill="#8a8494"/><circle cx="80" cy="42" r="3.300" fill="#8a8494"/><rect y="118" width="121" height="3.500" fill="#5a2db4"/></svg>
<div class="t" style="left:714.4px;top:784.6px;font-size:9.50px;color:#d0d0d0;text-shadow:0 1px 0 rgba(0,0,0,.7);">Curve_EngineTorque</div>
<div class="a" style="left:825px;top:648px;width:125px;height:127px;background:#333;box-shadow:0 0 3px rgba(0,0,0,.5)"></div>
<svg class="a" style="left:827px;top:650.7px;" width="121" height="121.3" viewBox="0 0 121 122"><rect width="120" height="118" fill="url(#stbg)"/><path d="M52 56v-9.500h16M52 66v11h16" stroke="#d4dcdc" stroke-width="2.400" fill="none"/><path d="M41 51.500l19 2v17.500L41 69z" fill="#858a8c"/><path d="M41 51.500l19 2v17.500L41 69z" fill="url(#plate)" opacity=".3"/>
<path d="M62 39l18-3v17.500L62 55z" fill="url(#plate)"/><path d="M63 69l15-1.500v17L63 85z" fill="url(#plate)" opacity=".88"/><rect y="118" width="121" height="3.500" fill="#6fd0e0"/></svg>
<div class="t" style="left:869.3px;top:784.6px;font-size:9.50px;color:#d0d0d0;text-shadow:0 1px 0 rgba(0,0,0,.7);">FEngine</div>
<div class="a" style="left:953px;top:648px;width:125px;height:127px;background:#333;box-shadow:0 0 3px rgba(0,0,0,.5)"></div>
<svg class="a" style="left:955px;top:650.7px;" width="121" height="121.3" viewBox="0 0 121 122"><rect width="120" height="118" fill="url(#stbg)"/><path d="M52 56v-9.500h16M52 66v11h16" stroke="#d4dcdc" stroke-width="2.400" fill="none"/><path d="M41 51.500l19 2v17.500L41 69z" fill="#858a8c"/><path d="M41 51.500l19 2v17.500L41 69z" fill="url(#plate)" opacity=".3"/>
<path d="M62 39l18-3v17.500L62 55z" fill="url(#plate)"/><path d="M63 69l15-1.500v17L63 85z" fill="url(#plate)" opacity=".88"/><rect y="118" width="121" height="3.500" fill="#6fd0e0"/></svg>
<div class="t" style="left:977.2px;top:784.6px;font-size:9.50px;color:#d0d0d0;text-shadow:0 1px 0 rgba(0,0,0,.7);">FSuspensionData</div>
<div class="a" style="left:1081px;top:648px;width:125px;height:127px;background:#333;box-shadow:0 0 3px rgba(0,0,0,.5)"></div>
<svg class="a" style="left:1083px;top:650.7px;" width="121" height="121.3" viewBox="0 0 121 122"><rect width="120" height="118" fill="url(#stbg)"/><path d="M52 56v-9.500h16M52 66v11h16" stroke="#d4dcdc" stroke-width="2.400" fill="none"/><path d="M41 51.500l19 2v17.500L41 69z" fill="#858a8c"/><path d="M41 51.500l19 2v17.500L41 69z" fill="url(#plate)" opacity=".3"/>
<path d="M62 39l18-3v17.500L62 55z" fill="url(#plate)"/><path d="M63 69l15-1.500v17L63 85z" fill="url(#plate)" opacity=".88"/><rect y="118" width="121" height="3.500" fill="#6fd0e0"/></svg>
<div class="t" style="left:1116.6px;top:784.6px;font-size:9.50px;color:#d0d0d0;text-shadow:0 1px 0 rgba(0,0,0,.7);">FWheelData</div>
<div class="t" style="left:317.0px;top:845.7px;font-size:9.70px;color:#d8d8d8;text-shadow:0 1px 0 rgba(0,0,0,.7);">7 items</div>
<svg class="a" style="left:1138px;top:846.5px;" width="13" height="8" viewBox="0 0 13 8"><path d="M0 4q6.500-7 13 0-6.500 7-13 0z" fill="#d8d8d8"/><circle cx="6.500" cy="4" r="2.400" fill="#3e3e3e"/><circle cx="6.500" cy="4" r="1.100" fill="#d8d8d8"/></svg>
<div class="t" style="left:1154.0px;top:845.7px;font-size:9.70px;color:#d8d8d8;text-shadow:0 1px 0 rgba(0,0,0,.7);">View Options</div>
<svg class="a" style="left:1213px;top:849.0px;" width="7" height="4" viewBox="0 0 7 4"><path d="M0 0h6.500L3.250 3.800z" fill="#d0d0d0"/></svg>
</body></html>
